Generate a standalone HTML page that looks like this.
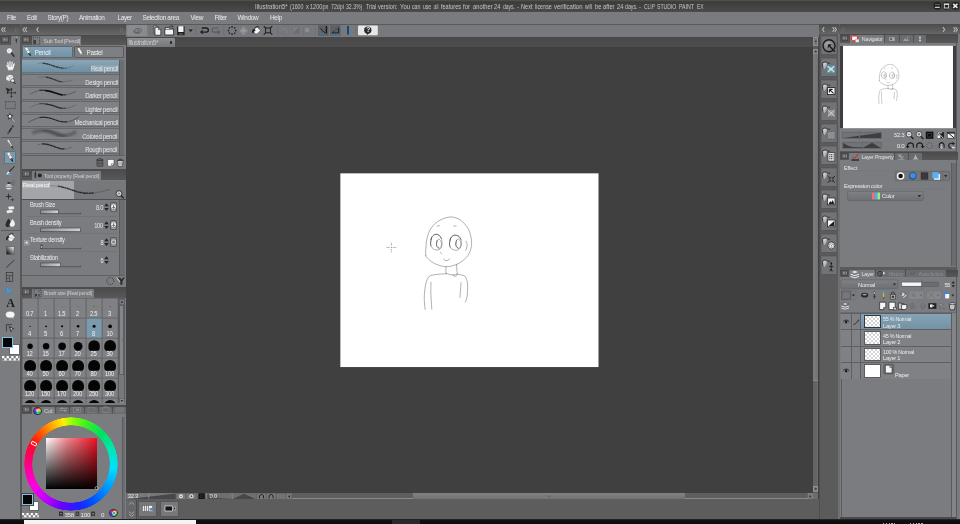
<!DOCTYPE html>
<html>
<head>
<meta charset="utf-8">
<title>CLIP STUDIO PAINT</title>
<style>
*{margin:0;padding:0;box-sizing:border-box}
html,body{width:960px;height:524px;overflow:hidden;background:#404040}
body{position:relative;font-family:"Liberation Sans",sans-serif;font-size:6.3px;color:#e4e4e4;font-variant-ligatures:none;font-feature-settings:"liga" 0,"clig" 0}
#wrap{position:absolute;left:0;top:0;width:960px;height:524px;overflow:hidden}
.a{position:absolute}
.t{position:absolute;white-space:nowrap;line-height:8px;color:#e6e6e6;opacity:0.99}
.pbg{background:#7b7c80}
.tabrow{background:linear-gradient(#4a4a4a,#585858)}
.tab{position:absolute;background:#7b7c80;border-radius:1px 1px 0 0}
.tabi{position:absolute;background:#6b6c6f;border-radius:1px 1px 0 0}
.btn{position:absolute;background:#6e6f72;border:0.5px solid #565656}
svg{position:absolute;overflow:visible}
.m{top:2.2px;font-size:6.4px;color:#ececec;letter-spacing:-0.32px}
.st{font-size:6.3px;letter-spacing:-0.3px;color:#e6e6e6;line-height:7px;transform:scaleX(0.965);transform-origin:right}
.pl{font-size:6.5px;letter-spacing:-0.3px;color:#ececec;line-height:7px;transform:scaleX(0.885);transform-origin:left}
.bl{font-size:6.8px;letter-spacing:-0.3px;color:#f0f0f0;line-height:7px;transform:scaleX(0.86);transform-origin:center}
.ly{font-size:6.2px;letter-spacing:-0.3px;color:#ececec;line-height:7px;transform:scaleX(0.93);transform-origin:left}
.lyn{transform:scaleX(0.87)}
.tt{top:3px;font-size:6.4px;color:#c6c6c6;transform-origin:left;line-height:7px}
</style>
</head>
<body>
<div id="wrap">
<!-- ===== TITLE BAR ===== -->
<div class="a" id="titlebar" style="left:0;top:0;width:960px;height:11.5px;background:linear-gradient(#585858 0,#454545 1px,#3c3c3c 2px,#4b4b4b)">
<div class="t tt" style="left:255px;transform:scaleX(0.924)">Illustration5*</div>
<div class="t tt" style="left:290.25px;transform:scaleX(0.825)">(1600</div>
<div class="t tt" style="left:306.25px;transform:scaleX(0.900)">x</div>
<div class="t tt" style="left:309.75px;transform:scaleX(0.875)">1200px</div>
<div class="t tt" style="left:330.6px;transform:scaleX(0.825)">72dpi</div>
<div class="t tt" style="left:345.6px;transform:scaleX(0.805)">32.3%)</div>
<div class="t tt" style="left:366px;transform:scaleX(0.819)">Trial</div>
<div class="t tt" style="left:378.1px;transform:scaleX(0.866)">version:</div>
<div class="t tt" style="left:400px;transform:scaleX(0.926)">You</div>
<div class="t tt" style="left:412.25px;transform:scaleX(0.810)">can</div>
<div class="t tt" style="left:423.1px;transform:scaleX(0.790)">use</div>
<div class="t tt" style="left:433.75px;transform:scaleX(0.679)">all</div>
<div class="t tt" style="left:440.6px;transform:scaleX(0.866)">features</div>
<div class="t tt" style="left:463.1px;transform:scaleX(0.924)">for</div>
<div class="t tt" style="left:472.8px;transform:scaleX(0.904)">another</div>
<div class="t tt" style="left:494.4px;transform:scaleX(0.900)">24</div>
<div class="t tt" style="left:502.5px;transform:scaleX(0.779)">days.</div>
<div class="t tt" style="left:516.9px;transform:scaleX(0.900)">-</div>
<div class="t tt" style="left:521px;transform:scaleX(0.875)">Next</div>
<div class="t tt" style="left:535px;transform:scaleX(0.849)">license</div>
<div class="t tt" style="left:554px;transform:scaleX(0.933)">verification</div>
<div class="t tt" style="left:585px;transform:scaleX(0.777)">will</div>
<div class="t tt" style="left:594.5px;transform:scaleX(0.900)">be</div>
<div class="t tt" style="left:603.1px;transform:scaleX(0.900)">after</div>
<div class="t tt" style="left:616.9px;transform:scaleX(0.900)">24</div>
<div class="t tt" style="left:625px;transform:scaleX(0.818)">days.</div>
<div class="t tt" style="left:639.4px;transform:scaleX(0.900)">-</div>
<div class="t tt" style="left:643.5px;transform:scaleX(0.767)">CLIP</div>
<div class="t tt" style="left:656.9px;transform:scaleX(0.801)">STUDIO</div>
<div class="t tt" style="left:679px;transform:scaleX(0.817)">PAINT</div>
<div class="t tt" style="left:696.5px;transform:scaleX(0.774)">EX</div>

<svg style="left:930px;top:0" width="30" height="12" viewBox="930 0 30 12">
<circle cx="937.3" cy="5.8" r="3.9" fill="#222"/><circle cx="946.5" cy="5.8" r="3.9" fill="#222"/><circle cx="955.3" cy="5.8" r="3.9" fill="#222"/>
<path d="M935 4.5h4.7" stroke="#8a8a8a" stroke-width="0.6"/><path d="M934.9 7.3h4.8" stroke="#e4e4e4" stroke-width="1.1"/>
<rect x="944.3" y="4.2" width="4.4" height="3.8" fill="none" stroke="#dcdcdc" stroke-width="0.9"/><path d="M943.9 4.2h5.2" stroke="#dcdcdc" stroke-width="1.3"/>
<path d="M953.2 3.9 L957.4 7.9 M957.4 3.9 L953.2 7.9" stroke="#ececec" stroke-width="1.5"/>
</svg>
</div>
<!-- ===== MENU BAR ===== -->
<div class="a" id="menubar" style="left:0;top:11.5px;width:960px;height:12px;background:#7a7b7f">
<div class="t m" style="left:7px">File</div>
<div class="t m" style="left:27px">Edit</div>
<div class="t m" style="left:47.5px">Story(P)</div>
<div class="t m" style="left:79px">Animation</div>
<div class="t m" style="left:117.5px">Layer</div>
<div class="t m" style="left:142.5px">Selection area</div>
<div class="t m" style="left:190.5px">View</div>
<div class="t m" style="left:214.5px">Filter</div>
<div class="t m" style="left:237.5px">Window</div>
<div class="t m" style="left:270px">Help</div>
</div>
<!-- ===== LEFT DOCK ===== -->
<div class="a" id="leftdock" style="left:0;top:23.5px;width:126.2px;height:495.5px;background:#585858"></div>
<!-- dock header bars -->
<div class="a" style="left:0;top:23.5px;width:20.3px;height:11px;background:linear-gradient(#4b4b4b,#686868)"></div>
<div class="a" style="left:21.5px;top:23.5px;width:104.7px;height:11px;background:linear-gradient(#4b4b4b,#686868)"></div>
<svg style="left:0;top:23.5px" width="126" height="11" viewBox="0 0 126 11">
<path d="M3.2 3.2 L1.6 5.6 L3.2 8 M5.4 3.2 L3.8 5.6 L5.4 8" stroke="#b4b4b6" stroke-width="1.1" fill="none"/>
<path d="M24.6 3.2 L23 5.6 L24.6 8 M26.8 3.2 L25.2 5.6 L26.8 8" stroke="#b4b4b6" stroke-width="1.1" fill="none"/>
<path d="M38.4 3.2 L36.8 5.6 L38.4 8" stroke="#b4b4b6" stroke-width="1.1" fill="none"/>
<path d="M15.5 3.5v4.4M17.3 3.5v4.4M120.5 3.5v4.4M122.3 3.5v4.4" stroke="#777" stroke-width="0.5"/>
</svg>
<!-- tab rows -->
<div class="a tabrow" style="left:0;top:35px;width:20.3px;height:10.3px"></div>
<div class="a tabrow" style="left:21.5px;top:35px;width:104.7px;height:10.3px"></div>
<div class="a" style="left:1.3px;top:36.2px;width:8px;height:6.6px;background:#5f5f61;border:0.5px solid #484848"></div>
<div class="a" style="left:22.2px;top:36.2px;width:8px;height:6.6px;background:#5f5f61;border:0.5px solid #484848"></div>
<div class="tab" style="left:11px;top:36px;width:9.3px;height:9.3px"></div>
<div class="tab" style="left:31.5px;top:36px;width:49.5px;height:9.3px"></div>
<svg style="left:0;top:35px" width="126" height="11" viewBox="0 0 126 11">
<path d="M3.6 3 L5.6 4.6 L3.6 6.2Z" fill="#a4a4a6"/><path d="M6.8 3v3.2" stroke="#a4a4a6" stroke-width="0.7" fill="none"/>
<path d="M24.5 3 L26.5 4.6 L24.5 6.2Z" fill="#a4a4a6"/><path d="M27.7 3v3.2" stroke="#a4a4a6" stroke-width="0.7" fill="none"/>
<path d="M16.4 1.8 L15.4 5 L16.4 8.6 L17.4 5 Z" fill="#3a3a3a"/><path d="M16.4 1.6v2" stroke="#ddd" stroke-width="0.6"/>
<rect x="33.4" y="2.2" width="6.2" height="7.6" fill="none" stroke="#333" stroke-width="0.7" stroke-dasharray="1 0.8"/><rect x="33.6" y="5" width="2.4" height="4" fill="#3c3c3c"/>
</svg>
<div class="t" style="left:43.5px;top:37.4px;font-size:5.5px;letter-spacing:-0.25px;color:#d0d0d2">Sub Tool [Pencil]</div>
<!-- tool palette column -->
<div class="a pbg" style="left:0;top:45.3px;width:20.3px;height:473.7px"></div>
<!-- sub tool panel -->
<div class="a pbg" style="left:21.5px;top:45.3px;width:104.7px;height:123.7px"></div>
<div class="a" style="left:22.4px;top:46.4px;width:50.6px;height:12px;background:linear-gradient(#85a2b3,#7292a5);border:0.5px solid #55697a;border-radius:1px"></div>
<div class="a" style="left:73.8px;top:46.4px;width:50.6px;height:12px;background:#7e7f83;border:0.5px solid #5a5a5c;border-radius:1px"></div>
<div class="t" style="left:34.8px;top:48.6px;font-size:6.4px;letter-spacing:-0.3px;color:#f2f2f2">Pencil</div>
<div class="t" style="left:86.5px;top:48.6px;font-size:6.4px;letter-spacing:-0.3px;color:#f0f0f0">Pastel</div>
<svg style="left:0;top:45px" width="126" height="14" viewBox="0 0 126 14">
<path d="M24.8 3.2 L27.2 2 L30.2 7.4 L27.8 8.8 Z" fill="#f6f6f6" stroke="#555" stroke-width="0.3"/><path d="M27.8 8.8 L30.2 7.4 L31 11.6 Z" fill="#1e1e1e"/><path d="M26.4 6.2 L28.8 4.8" stroke="#666" stroke-width="0.6"/><path d="M28.4 9.4 L30.4 8.2" stroke="#ccc" stroke-width="0.5"/>
<path d="M77 3.4 L79.4 2.4 L83.2 9 L80.8 10.2 Z" fill="#f4f4f4" stroke="#444" stroke-width="0.4"/><path d="M80.6 9.2 L82.8 8.2" stroke="#666" stroke-width="0.8"/>
</svg>
<div class="a" style="left:22px;top:60px;width:96.5px;height:13px;background:linear-gradient(#8aa7b8,#6e8ea1);border-bottom:0.6px solid #5d7686"></div>
<div class="t st" style="right:842.5px;top:65.2px;background:rgba(160,175,185,0.55);">Real pencil</div>
<div class="a" style="left:22px;top:73.5px;width:96.5px;height:12.7px;background:#808185;border-top:0.5px solid #66676a;border-bottom:0.6px solid #66676a"></div>
<div class="t st" style="right:842.5px;top:78.7px;">Design pencil</div>
<div class="a" style="left:22px;top:87px;width:96.5px;height:12.7px;background:#808185;border-top:0.5px solid #66676a;border-bottom:0.6px solid #66676a"></div>
<div class="t st" style="right:842.5px;top:92.2px;">Darker pencil</div>
<div class="a" style="left:22px;top:100.5px;width:96.5px;height:12.7px;background:#808185;border-top:0.5px solid #66676a;border-bottom:0.6px solid #66676a"></div>
<div class="t st" style="right:842.5px;top:105.7px;">Lighter pencil</div>
<div class="a" style="left:22px;top:114px;width:96.5px;height:12.7px;background:#808185;border-top:0.5px solid #66676a;border-bottom:0.6px solid #66676a"></div>
<div class="t st" style="right:842.5px;top:119.2px;">Mechanical pencil</div>
<div class="a" style="left:22px;top:127.5px;width:96.5px;height:12.7px;background:#808185;border-top:0.5px solid #66676a;border-bottom:0.6px solid #66676a"></div>
<div class="t st" style="right:842.5px;top:132.7px;">Colored pencil</div>
<div class="a" style="left:22px;top:141px;width:96.5px;height:12.7px;background:#808185;border-top:0.5px solid #66676a;border-bottom:0.6px solid #66676a"></div>
<div class="t st" style="right:842.5px;top:146.2px;">Rough pencil</div>

<div class="a" style="left:118.8px;top:60px;width:5.6px;height:95px;background:#6c6d70;border-left:0.5px solid #5b5b5d"></div>
<svg style="left:0;top:0" width="126" height="160" viewBox="0 0 126 160"><defs><filter id="b1"><feGaussianBlur stdDeviation="0.9"/></filter><filter id="b0"><feGaussianBlur stdDeviation="0.25"/></filter></defs><g filter="url(#b0)"><path d="M37.6 63.7 C39.5 63.2 41 63.1 42.8 63.2 C47 63.6 50 64.8 53.2 65.8 C58 67.4 62 68.4 66.8 68.2 C69.5 67.6 72 66.4 74 65.3" stroke="#2c3840" stroke-width="0.4" fill="none" opacity="0.6"/><path d="M42.8 63.2 C47 63.6 50 64.8 53.2 65.8 C57 67 60 68 63 68.2" stroke="#1c2428" stroke-width="1.25" fill="none" opacity="0.85" stroke-dasharray="2.4 0.35 3.2 0.3 1.4 0.5 2 0.3"/><path d="M63 68.2 C64.5 68.3 65.6 68.3 66.8 68.2" stroke="#1c2428" stroke-width="0.8" fill="none" opacity="0.7" stroke-dasharray="0.9 0.6"/></g><g filter="url(#b0)"><path d="M38.7 77.3 C42 76.6 44.5 76.8 47 77.3 C50.5 78 53.5 79.4 56.4 80.4 C59 81.3 61.5 81.8 63.7 81.75 C67 81.6 70 80.9 73 79.9" stroke="#2a2a2a" stroke-width="0.4" fill="none" opacity="0.55"/><path d="M46 77.1 C50 77.8 53.5 79.4 56.4 80.4 C58.6 81.2 60.6 81.7 62.6 81.8" stroke="#1e1e1e" stroke-width="1.15" fill="none" opacity="0.8" stroke-dasharray="3 0.3 2.6 0.3 1.8 0.4"/></g><g filter="url(#b0)"><path d="M30.3 94.0 C35.3 91.4 38.8 90.0 42.8 90.0 C47.8 90.0 52.3 91.8 55.3 92.9 C58.3 94.0 60.7 95.0 63.7 95.0 C68.7 95.0 72.2 93.0 76.2 91.3" stroke="#1a1a1a" stroke-width="0.45" fill="none" opacity="0.7"/><path d="M39.8 90.2 C44.8 89.8 51.3 91.4 55.3 92.9 C58.3 94.0 61.7 95.0 65.7 94.9" stroke="#141414" stroke-width="1.0" fill="none" opacity="0.8" stroke-linecap="round"/><path d="M45.8 90.6 C48.8 91.0 53.3 92.0 55.3 92.9 C57.3 93.7 59.7 94.7 61.7 94.9" stroke="#0c0c0c" stroke-width="1.6" fill="none" opacity="0.85" stroke-linecap="round"/></g><g filter="url(#b0)"><path d="M30.3 107.5 C35.3 104.9 38.8 103.5 42.8 103.5 C47.8 103.5 52.3 105.3 55.3 106.4 C58.3 107.5 60.7 108.5 63.7 108.5 C68.7 108.5 72.2 106.5 76.2 104.8" stroke="#2a2a2a" stroke-width="0.45" fill="none" opacity="0.55"/><path d="M39.8 103.7 C44.8 103.3 51.3 104.9 55.3 106.4 C58.3 107.5 61.7 108.5 65.7 108.4" stroke="#222" stroke-width="1.0" fill="none" opacity="0.6" stroke-linecap="round"/><path d="M45.8 104.1 C48.8 104.5 53.3 105.5 55.3 106.4 C57.3 107.2 59.7 108.2 61.7 108.4" stroke="#1c1c1c" stroke-width="1.4" fill="none" opacity="0.6" stroke-linecap="round"/></g><g filter="url(#b0)"><path d="M28.2 122.5 C33 119.6 38.5 117.2 43.9 117.1 C48.5 117 52 118.6 55.3 119.9 C59 121.3 62.5 122.2 65.8 122 C70.5 121.6 75 119.6 79.1 116.8" stroke="#1c1c1c" stroke-width="0.55" fill="none" opacity="0.75"/><path d="M40 117.4 C46 116.8 51 118.3 55.3 119.9 C59 121.3 62.5 122.2 66.8 121.9" stroke="#141414" stroke-width="0.95" fill="none" opacity="0.8" stroke-linecap="round"/></g><path d="M33.5 132.4 C37 131 41 130.2 44.9 130.3 C49 130.5 52 132 55.3 133.4 C58.5 134.8 61 135.9 63.7 136 C68 136 72 134 75.1 132.4" stroke="#2a2a2a" stroke-width="3.2" fill="none" opacity="0.42" stroke-linecap="round" filter="url(#b1)"/><path d="M44 130.6 C49 130.6 52 132.2 55.3 133.6 C58.5 135 61 135.9 65 135.8" stroke="#1e1e1e" stroke-width="2" fill="none" opacity="0.4" stroke-linecap="round" filter="url(#b1)"/><g filter="url(#b0)"><path d="M37.6 144.9 C40 144.2 42 143.8 44.4 143.9 C48.5 144.2 52 145.8 55.3 147 C58.5 148.2 61 149.1 63.7 149 C67 148.8 69.5 148.2 72 147.3" stroke="#222" stroke-width="0.45" fill="none" opacity="0.6"/><path d="M42 143.9 C47 143.8 51.5 145.6 55.3 147 C58.5 148.2 61 149.1 64.5 148.9" stroke="#161616" stroke-width="1.3" fill="none" opacity="0.8" stroke-dasharray="4 0.25 3.4 0.3 2.4 0.3"/></g></svg>
<div class="a" style="left:21.5px;top:155px;width:103.5px;height:0.6px;background:#5f6063"></div>

<!-- sub tool bottom icons -->
<svg style="left:90px;top:157.3px" width="36" height="12" viewBox="0 0 36 12">
<path d="M6.5 3 L9.8 1.2 L13.2 3 Z M7 3.6 h5.8 v5.6 h-5.8 Z" fill="none" stroke="#2e2e2e" stroke-width="0.7"/><path d="M8.6 4v5M10 4v5M11.4 4v5M7 6.4h5.8" stroke="#2e2e2e" stroke-width="0.4"/>
<path d="M17.6 2.4 h6.4 v4.6 l-2.2 2.2 h-4.2 Z" fill="#f8f8f8" stroke="#333" stroke-width="0.5"/><path d="M21.4 8.8 v-2 h2" fill="none" stroke="#333" stroke-width="0.5"/>
<path d="M27.6 3.6 h5.4 l-0.6 6 h-4.2 Z" fill="#e8e8e8" stroke="#2a2a2a" stroke-width="0.6"/><path d="M27 3.2 h6.6 M29 2.2 h2.6" stroke="#2a2a2a" stroke-width="0.8"/><path d="M29.2 4.6v4M30.3 4.6v4M31.4 4.6v4" stroke="#555" stroke-width="0.4"/>
</svg>
<!-- tool property tabs -->
<div class="a tabrow" style="left:21.5px;top:169px;width:104.7px;height:10.9px"></div>
<div class="a" style="left:22.2px;top:170.4px;width:8.2px;height:6.6px;background:#5f5f61;border:0.5px solid #484848"></div>
<div class="tab" style="left:31.5px;top:170.7px;width:69.5px;height:9.2px"></div>
<svg style="left:21.5px;top:169.4px" width="104" height="11" viewBox="0 0 104 11">
<path d="M3 3.2 L5 4.8 L3 6.4Z" fill="#a4a4a6"/><path d="M6.2 3.2v3.2" stroke="#a4a4a6" stroke-width="0.7" fill="none"/>
<path d="M13.4 1.6 L12.6 4.6 L12.6 8.8 L14.2 8.8 L14.2 4.6 Z" fill="#333"/><circle cx="17.8" cy="6.4" r="1.9" fill="#222"/>
</svg>
<div class="t" style="left:43.8px;top:171.6px;font-size:5.5px;letter-spacing:-0.22px;color:#d0d0d2;transform:scaleX(0.96);transform-origin:left">Tool property [Real pencil]</div>
<!-- tool property panel -->
<div class="a pbg" style="left:21.5px;top:179.8px;width:104.7px;height:108px"></div>
<div class="a" style="left:22px;top:180.6px;width:104px;height:19px;background:#77787c;border-bottom:0.6px solid #4e4e50"></div>
<div class="a" style="left:22px;top:180.6px;width:51.8px;height:18.6px;background:#a4a5a8"></div>
<div class="a" style="left:22px;top:180.8px;width:28.4px;height:7.4px;background:#b4b5b8"></div>
<div class="t" style="left:22.8px;top:181.2px;font-size:6.2px;letter-spacing:-0.3px;color:#f6f6f6;line-height:7px">Real pencil</div>
<svg style="left:22px;top:180px" width="104" height="20" viewBox="0 0 104 20">
<g filter="url(#b0)"><path d="M27 5.8 C34 5.6 40 6.6 46 8.6 C53 11 60 13.4 68 13.2 C74 13 80 11.6 88 9.4" stroke="#2a2a2a" stroke-width="0.45" fill="none" opacity="0.6"/>
<path d="M36 6.2 C43 7.2 50 10.2 56 12 C61 13.3 66 13.7 72 12.9" stroke="#1c1c1c" stroke-width="1.35" fill="none" opacity="0.8" stroke-dasharray="2.6 0.35 3.4 0.3 1.8 0.45 2.2 0.3"/></g>
<circle cx="97" cy="13.6" r="2.9" fill="#d8d8da" stroke="#1e1e1e" stroke-width="0.8"/><path d="M99.2 15.8 L101.8 18.4" stroke="#1e1e1e" stroke-width="1.3"/><path d="M95.6 13.6h2.8M97 12.2v2.8" stroke="#444" stroke-width="0.4"/>
</svg>
<div class="t pl" style="left:30px;top:201.2px">Brush Size</div><svg style="left:40px;top:208.79999999999998px" width="42" height="6" viewBox="0 0 42 6"><path d="M0.6 4.7h40.2" stroke="#47484a" stroke-width="0.7"/><path d="M40.6 3.6v1.4" stroke="#47484a" stroke-width="0.7"/><rect x="0.7" y="1" width="17.6" height="3.7" fill="url(#slg)" stroke="#404143" stroke-width="0.6"/></svg><div class="t pl" style="right:857px;top:204.2px;color:#e6e6e6;transform-origin:right">8.0</div><svg style="left:104px;top:202.79999999999998px" width="5" height="8.4" viewBox="0 0 5 8.4"><path d="M0.2 3.3 L2.5 0.3 L4.8 3.3 Z M0.2 4.9 L2.5 7.9 L4.8 4.9 Z" fill="#262626"/></svg><div class="a" style="left:109.8px;top:201.79999999999998px;width:7.2px;height:10.2px;background:#85868a;border:0.5px solid #5a5b5d;border-radius:1px"></div><svg style="left:109.8px;top:201.79999999999998px" width="7.2" height="10.2" viewBox="0 0 7.2 10.2"><circle cx="3.6" cy="4.8" r="2.5" fill="#f2f2f2"/><path d="M3.6 3.2v2.6M2.5 5 L3.6 6.4 L4.7 5" stroke="#222" stroke-width="0.7" fill="none"/><path d="M2.2 8.3h2.8" stroke="#ddd" stroke-width="0.5"/></svg><div class="a" style="left:27px;top:215.6px;width:90px;height:0.5px;background:#737478"></div>
<div class="t pl" style="left:30px;top:219px">Brush density</div><svg style="left:40px;top:226.6px" width="42" height="6" viewBox="0 0 42 6"><path d="M0.6 4.7h40.2" stroke="#47484a" stroke-width="0.7"/><path d="M40.6 3.6v1.4" stroke="#47484a" stroke-width="0.7"/><rect x="0.7" y="1" width="39.8" height="3.7" fill="url(#slg)" stroke="#404143" stroke-width="0.6"/></svg><div class="t pl" style="right:857px;top:222px;color:#e6e6e6;transform-origin:right">100</div><svg style="left:104px;top:220.6px" width="5" height="8.4" viewBox="0 0 5 8.4"><path d="M0.2 3.3 L2.5 0.3 L4.8 3.3 Z M0.2 4.9 L2.5 7.9 L4.8 4.9 Z" fill="#262626"/></svg><div class="a" style="left:109.8px;top:219.6px;width:7.2px;height:10.2px;background:#85868a;border:0.5px solid #5a5b5d;border-radius:1px"></div><svg style="left:109.8px;top:219.6px" width="7.2" height="10.2" viewBox="0 0 7.2 10.2"><circle cx="3.6" cy="4.8" r="2.5" fill="#f2f2f2"/><path d="M3.6 3.2v2.6M2.5 5 L3.6 6.4 L4.7 5" stroke="#222" stroke-width="0.7" fill="none"/><path d="M2.2 8.3h2.8" stroke="#ddd" stroke-width="0.5"/></svg><div class="a" style="left:27px;top:233.4px;width:90px;height:0.5px;background:#737478"></div>
<div class="t pl" style="left:30px;top:236.4px">Texture density</div><svg style="left:40px;top:244.0px" width="42" height="6" viewBox="0 0 42 6"><path d="M0.6 4.7h40.2" stroke="#47484a" stroke-width="0.7"/><path d="M40.6 3.6v1.4" stroke="#47484a" stroke-width="0.7"/><rect x="0.7" y="1" width="1.8" height="3.7" fill="#b4b5b8" stroke="#404143" stroke-width="0.6"/></svg><div class="t pl" style="right:857px;top:239.4px;color:#e6e6e6;transform-origin:right">8</div><svg style="left:104px;top:238.0px" width="5" height="8.4" viewBox="0 0 5 8.4"><path d="M0.2 3.3 L2.5 0.3 L4.8 3.3 Z M0.2 4.9 L2.5 7.9 L4.8 4.9 Z" fill="#262626"/></svg><div class="a" style="left:109.8px;top:237.0px;width:7.2px;height:10.2px;background:#85868a;border:0.5px solid #5a5b5d;border-radius:1px"></div><svg style="left:109.8px;top:237.0px" width="7.2" height="10.2" viewBox="0 0 7.2 10.2"><rect x="1.7" y="3.1" width="3.8" height="3.8" rx="1.1" fill="none" stroke="#f0f0f0" stroke-width="0.8"/></svg><svg style="left:24px;top:239.6px" width="5.4" height="5.4" viewBox="0 0 5.4 5.4"><rect x="0.3" y="0.3" width="4.8" height="4.8" fill="#8e8f92" stroke="#a8a9ac" stroke-width="0.4"/><path d="M1.2 2.7h3M2.7 1.2v3" stroke="#f0f0f0" stroke-width="0.7"/></svg><div class="a" style="left:27px;top:250.8px;width:90px;height:0.5px;background:#737478"></div>
<div class="t pl" style="left:30px;top:254px">Stabilization</div><svg style="left:40px;top:261.6px" width="42" height="6" viewBox="0 0 42 6"><path d="M0.6 4.7h40.2" stroke="#47484a" stroke-width="0.7"/><path d="M40.6 3.6v1.4" stroke="#47484a" stroke-width="0.7"/><rect x="0.7" y="1" width="19.6" height="3.7" fill="url(#slg)" stroke="#404143" stroke-width="0.6"/></svg><div class="t pl" style="right:857px;top:257px;color:#e6e6e6;transform-origin:right">6</div><svg style="left:104px;top:255.6px" width="5" height="8.4" viewBox="0 0 5 8.4"><path d="M0.2 3.3 L2.5 0.3 L4.8 3.3 Z M0.2 4.9 L2.5 7.9 L4.8 4.9 Z" fill="#262626"/></svg>
<svg style="left:0;top:0" width="1" height="1"><defs><linearGradient id="slg" x1="0" y1="0" x2="1" y2="0"><stop offset="0" stop-color="#8e8f92"/><stop offset="1" stop-color="#cfd0d3"/></linearGradient></defs></svg>
<div class="a" style="left:119.4px;top:200px;width:5.4px;height:75px;background:#6c6d70;border-left:0.5px solid #5b5b5d"></div>
<div class="a" style="left:21.5px;top:275.2px;width:103.5px;height:0.6px;background:#5f6063"></div>
<svg style="left:104px;top:276px" width="22" height="12" viewBox="0 0 22 12">
<circle cx="6.3" cy="5" r="3.5" fill="none" stroke="#2a2a2a" stroke-width="0.95" stroke-dasharray="1 1.2"/>
<path d="M13.4 1.4 L16.4 5.2 L16.4 8.8 L18.4 8.8 L18.4 5.2 L20.8 1.6 L19 1.4 L17.6 3.6 L16.4 1.8 Z" fill="#2c2c2c"/><path d="M12.8 1.6 L15.8 5.8" stroke="#e8e8e8" stroke-width="0.9"/>
</svg>

<!-- brush size panel -->
<div class="a tabrow" style="left:21.5px;top:287.2px;width:104.7px;height:11px"></div>
<div class="a" style="left:22.2px;top:288.2px;width:8.2px;height:6.6px;background:#5f5f61;border:0.5px solid #484848"></div>
<div class="tab" style="left:31.5px;top:288.9px;width:62.5px;height:9.3px"></div>
<svg style="left:21.5px;top:287.4px" width="104" height="11" viewBox="0 0 104 11">
<path d="M3 3.2 L5 4.8 L3 6.4Z" fill="#a4a4a6"/><path d="M6.2 3.2v3.2" stroke="#a4a4a6" stroke-width="0.7" fill="none"/>
<rect x="12" y="2" width="7" height="8" fill="none" stroke="#333" stroke-width="0.7" stroke-dasharray="1.2 0.8"/><circle cx="14" cy="8" r="1" fill="#222"/><circle cx="17" cy="4" r="0.6" fill="#222"/><circle cx="17" cy="8" r="0.8" fill="#222"/>
</svg>
<div class="t" style="left:43.8px;top:289.3px;font-size:5.5px;letter-spacing:-0.22px;color:#d0d0d2;transform:scaleX(0.92);transform-origin:left">Brush size [Real pencil]</div>
<div class="a pbg" style="left:21.5px;top:298.2px;width:104.7px;height:107px"></div><div class="a" style="left:21.5px;top:298.2px;width:103.5px;height:105.3px;background:#5c5d60;overflow:hidden" id="bsgrid">
<svg style="left:0;top:0" width="104" height="106" viewBox="0 0 104 106"><rect x="0.5" y="0.5" width="15.2" height="19.2" fill="#808185"/><circle cx="8.1" cy="8.3" r="0.25" fill="#404040"/><rect x="16.5" y="0.5" width="15.2" height="19.2" fill="#808185"/><circle cx="24.1" cy="8.3" r="0.3" fill="#404040"/><rect x="32.5" y="0.5" width="15.2" height="19.2" fill="#808185"/><circle cx="40.1" cy="8.3" r="0.35" fill="#404040"/><rect x="48.5" y="0.5" width="15.2" height="19.2" fill="#808185"/><circle cx="56.1" cy="8.3" r="0.4" fill="#404040"/><rect x="64.5" y="0.5" width="15.2" height="19.2" fill="#808185"/><circle cx="72.1" cy="8.3" r="0.45" fill="#404040"/><rect x="80.5" y="0.5" width="15.2" height="19.2" fill="#808185"/><circle cx="88.1" cy="8.3" r="0.55" fill="#404040"/><rect x="0.5" y="20.5" width="15.2" height="19.2" fill="#808185"/><circle cx="8.1" cy="28.3" r="0.65" fill="#050505"/><rect x="16.5" y="20.5" width="15.2" height="19.2" fill="#808185"/><circle cx="24.1" cy="28.3" r="0.9" fill="#050505"/><rect x="32.5" y="20.5" width="15.2" height="19.2" fill="#808185"/><circle cx="40.1" cy="28.3" r="1.05" fill="#050505"/><rect x="48.5" y="20.5" width="15.2" height="19.2" fill="#808185"/><circle cx="56.1" cy="28.3" r="1.3" fill="#050505"/><rect x="64.5" y="20.5" width="15.2" height="19.2" fill="#7a9aad"/><circle cx="72.1" cy="28.3" r="1.5" fill="#050505"/><rect x="80.5" y="20.5" width="15.2" height="19.2" fill="#808185"/><circle cx="88.1" cy="28.3" r="1.9" fill="#050505"/><rect x="0.5" y="40.5" width="15.2" height="19.2" fill="#808185"/><circle cx="8.1" cy="48.3" r="2.7" fill="#050505"/><rect x="16.5" y="40.5" width="15.2" height="19.2" fill="#808185"/><circle cx="24.1" cy="48.3" r="3.25" fill="#050505"/><rect x="32.5" y="40.5" width="15.2" height="19.2" fill="#808185"/><circle cx="40.1" cy="48.3" r="3.75" fill="#050505"/><rect x="48.5" y="40.5" width="15.2" height="19.2" fill="#808185"/><circle cx="56.1" cy="48.3" r="4.4" fill="#050505"/><rect x="64.5" y="40.5" width="15.2" height="19.2" fill="#808185"/><path d="M66.39999999999999 47.9 a5.7 5.7 0 0 1 11.4 0 a5.7 5.7 0 0 1 -1.50 4.9 h-8.40 a5.7 5.7 0 0 1 -1.50 -4.9Z" fill="#050505"/><rect x="80.5" y="40.5" width="15.2" height="19.2" fill="#808185"/><path d="M82.19999999999999 47.9 a5.9 5.9 0 0 1 11.8 0 a5.9 5.9 0 0 1 -1.70 4.9 h-8.40 a5.9 5.9 0 0 1 -1.70 -4.9Z" fill="#050505"/><rect x="0.5" y="60.5" width="15.2" height="19.2" fill="#808185"/><path d="M2.0999999999999996 67.9 a6 6 0 0 1 12 0 a6 6 0 0 1 -1.80 4.9 h-8.40 a6 6 0 0 1 -1.80 -4.9Z" fill="#050505"/><rect x="16.5" y="60.5" width="15.2" height="19.2" fill="#808185"/><path d="M18.1 67.9 a6 6 0 0 1 12 0 a6 6 0 0 1 -1.80 4.9 h-8.40 a6 6 0 0 1 -1.80 -4.9Z" fill="#050505"/><rect x="32.5" y="60.5" width="15.2" height="19.2" fill="#808185"/><path d="M34.1 67.9 a6 6 0 0 1 12 0 a6 6 0 0 1 -1.80 4.9 h-8.40 a6 6 0 0 1 -1.80 -4.9Z" fill="#050505"/><rect x="48.5" y="60.5" width="15.2" height="19.2" fill="#808185"/><path d="M50.1 67.9 a6 6 0 0 1 12 0 a6 6 0 0 1 -1.80 4.9 h-8.40 a6 6 0 0 1 -1.80 -4.9Z" fill="#050505"/><rect x="64.5" y="60.5" width="15.2" height="19.2" fill="#808185"/><path d="M66.1 67.9 a6 6 0 0 1 12 0 a6 6 0 0 1 -1.80 4.9 h-8.40 a6 6 0 0 1 -1.80 -4.9Z" fill="#050505"/><rect x="80.5" y="60.5" width="15.2" height="19.2" fill="#808185"/><path d="M82.1 67.9 a6 6 0 0 1 12 0 a6 6 0 0 1 -1.80 4.9 h-8.40 a6 6 0 0 1 -1.80 -4.9Z" fill="#050505"/><rect x="0.5" y="80.5" width="15.2" height="19.2" fill="#808185"/><path d="M2.0999999999999996 87.9 a6 6 0 0 1 12 0 a6 6 0 0 1 -1.80 4.9 h-8.40 a6 6 0 0 1 -1.80 -4.9Z" fill="#050505"/><rect x="16.5" y="80.5" width="15.2" height="19.2" fill="#808185"/><path d="M18.1 87.9 a6 6 0 0 1 12 0 a6 6 0 0 1 -1.80 4.9 h-8.40 a6 6 0 0 1 -1.80 -4.9Z" fill="#050505"/><rect x="32.5" y="80.5" width="15.2" height="19.2" fill="#808185"/><path d="M34.1 87.9 a6 6 0 0 1 12 0 a6 6 0 0 1 -1.80 4.9 h-8.40 a6 6 0 0 1 -1.80 -4.9Z" fill="#050505"/><rect x="48.5" y="80.5" width="15.2" height="19.2" fill="#808185"/><path d="M50.1 87.9 a6 6 0 0 1 12 0 a6 6 0 0 1 -1.80 4.9 h-8.40 a6 6 0 0 1 -1.80 -4.9Z" fill="#050505"/><rect x="64.5" y="80.5" width="15.2" height="19.2" fill="#808185"/><path d="M66.1 87.9 a6 6 0 0 1 12 0 a6 6 0 0 1 -1.80 4.9 h-8.40 a6 6 0 0 1 -1.80 -4.9Z" fill="#050505"/><rect x="80.5" y="80.5" width="15.2" height="19.2" fill="#808185"/><path d="M82.1 87.9 a6 6 0 0 1 12 0 a6 6 0 0 1 -1.80 4.9 h-8.40 a6 6 0 0 1 -1.80 -4.9Z" fill="#050505"/><rect x="0.5" y="100.5" width="15.2" height="19.2" fill="#808185"/><path d="M2.0999999999999996 107.9 a6 6 0 0 1 12 0 a6 6 0 0 1 -1.80 4.9 h-8.40 a6 6 0 0 1 -1.80 -4.9Z" fill="#050505"/><rect x="16.5" y="100.5" width="15.2" height="19.2" fill="#808185"/><path d="M18.1 107.9 a6 6 0 0 1 12 0 a6 6 0 0 1 -1.80 4.9 h-8.40 a6 6 0 0 1 -1.80 -4.9Z" fill="#050505"/><rect x="32.5" y="100.5" width="15.2" height="19.2" fill="#808185"/><path d="M34.1 107.9 a6 6 0 0 1 12 0 a6 6 0 0 1 -1.80 4.9 h-8.40 a6 6 0 0 1 -1.80 -4.9Z" fill="#050505"/><rect x="48.5" y="100.5" width="15.2" height="19.2" fill="#808185"/><path d="M50.1 107.9 a6 6 0 0 1 12 0 a6 6 0 0 1 -1.80 4.9 h-8.40 a6 6 0 0 1 -1.80 -4.9Z" fill="#050505"/><rect x="64.5" y="100.5" width="15.2" height="19.2" fill="#808185"/><path d="M66.1 107.9 a6 6 0 0 1 12 0 a6 6 0 0 1 -1.80 4.9 h-8.40 a6 6 0 0 1 -1.80 -4.9Z" fill="#050505"/><rect x="80.5" y="100.5" width="15.2" height="19.2" fill="#808185"/><path d="M82.1 107.9 a6 6 0 0 1 12 0 a6 6 0 0 1 -1.80 4.9 h-8.40 a6 6 0 0 1 -1.80 -4.9Z" fill="#050505"/></svg>
<div class="t bl" style="left:0.5px;width:15.2px;top:12.2px;text-align:center">0.7</div><div class="t bl" style="left:16.5px;width:15.2px;top:12.2px;text-align:center">1</div><div class="t bl" style="left:32.5px;width:15.2px;top:12.2px;text-align:center">1.5</div><div class="t bl" style="left:48.5px;width:15.2px;top:12.2px;text-align:center">2</div><div class="t bl" style="left:64.5px;width:15.2px;top:12.2px;text-align:center">2.5</div><div class="t bl" style="left:80.5px;width:15.2px;top:12.2px;text-align:center">3</div><div class="t bl" style="left:0.5px;width:15.2px;top:32.2px;text-align:center">4</div><div class="t bl" style="left:16.5px;width:15.2px;top:32.2px;text-align:center">5</div><div class="t bl" style="left:32.5px;width:15.2px;top:32.2px;text-align:center">6</div><div class="t bl" style="left:48.5px;width:15.2px;top:32.2px;text-align:center">7</div><div class="t bl" style="left:64.5px;width:15.2px;top:32.2px;text-align:center">8</div><div class="t bl" style="left:80.5px;width:15.2px;top:32.2px;text-align:center">10</div><div class="t bl" style="left:0.5px;width:15.2px;top:52.2px;text-align:center">12</div><div class="t bl" style="left:16.5px;width:15.2px;top:52.2px;text-align:center">15</div><div class="t bl" style="left:32.5px;width:15.2px;top:52.2px;text-align:center">17</div><div class="t bl" style="left:48.5px;width:15.2px;top:52.2px;text-align:center">20</div><div class="t bl" style="left:64.5px;width:15.2px;top:52.2px;text-align:center">25</div><div class="t bl" style="left:80.5px;width:15.2px;top:52.2px;text-align:center">30</div><div class="t bl" style="left:0.5px;width:15.2px;top:72.2px;text-align:center">40</div><div class="t bl" style="left:16.5px;width:15.2px;top:72.2px;text-align:center">50</div><div class="t bl" style="left:32.5px;width:15.2px;top:72.2px;text-align:center">60</div><div class="t bl" style="left:48.5px;width:15.2px;top:72.2px;text-align:center">70</div><div class="t bl" style="left:64.5px;width:15.2px;top:72.2px;text-align:center">80</div><div class="t bl" style="left:80.5px;width:15.2px;top:72.2px;text-align:center">100</div><div class="t bl" style="left:0.5px;width:15.2px;top:92.2px;text-align:center">120</div><div class="t bl" style="left:16.5px;width:15.2px;top:92.2px;text-align:center">150</div><div class="t bl" style="left:32.5px;width:15.2px;top:92.2px;text-align:center">170</div><div class="t bl" style="left:48.5px;width:15.2px;top:92.2px;text-align:center">200</div><div class="t bl" style="left:64.5px;width:15.2px;top:92.2px;text-align:center">250</div><div class="t bl" style="left:80.5px;width:15.2px;top:92.2px;text-align:center">300</div><div class="t bl" style="left:0.5px;width:15.2px;top:112.2px;text-align:center"></div><div class="t bl" style="left:16.5px;width:15.2px;top:112.2px;text-align:center"></div><div class="t bl" style="left:32.5px;width:15.2px;top:112.2px;text-align:center"></div><div class="t bl" style="left:48.5px;width:15.2px;top:112.2px;text-align:center"></div><div class="t bl" style="left:64.5px;width:15.2px;top:112.2px;text-align:center"></div><div class="t bl" style="left:80.5px;width:15.2px;top:112.2px;text-align:center"></div>
<div class="a" style="left:97.2px;top:0.6px;width:5.8px;height:106px;background:#77787b"></div>
<div class="a" style="left:97.8px;top:6.6px;width:4.6px;height:70px;background:#85868a;border:0.5px solid #5e5f62"></div>
<svg style="left:97.2px;top:0.6px" width="5.8" height="106" viewBox="0 0 5.8 106"><rect x="0.4" y="0.4" width="5" height="5" fill="#7c7d80" stroke="#555" stroke-width="0.5"/><path d="M1.6 3.8 L2.9 1.8 L4.2 3.8 Z" fill="#2a2a2a"/><rect x="0.4" y="99.4" width="5" height="5" fill="#8a8b8e" stroke="#555" stroke-width="0.5"/><path d="M1.6 101 L2.9 103 L4.2 101 Z" fill="#2a2a2a"/><path d="M2 40h1.8M2 41h1.8M2 42h1.8" stroke="#666" stroke-width="0.4"/></svg>
</div>

<!-- color panel -->
<div class="a tabrow" style="left:21.5px;top:404.8px;width:104.7px;height:8.9px"></div>
<div class="a" style="left:22.2px;top:406.1px;width:8.2px;height:6.8px;background:#5f5f61;border:0.5px solid #484848"></div>
<div class="tab" style="left:31.5px;top:406.7px;width:23.4px;height:7px"></div>
<div class="tabi" style="left:55.800000000000004px;top:407px;width:13.4px;height:6.7px"></div>
<div class="tabi" style="left:70.19999999999999px;top:407px;width:13.4px;height:6.7px"></div>
<div class="tabi" style="left:84.6px;top:407px;width:13.4px;height:6.7px"></div>
<div class="tabi" style="left:99.0px;top:407px;width:13.4px;height:6.7px"></div>
<div class="tabi" style="left:113.4px;top:407px;width:12.6px;height:6.7px"></div>
<div class="a" style="left:33.1px;top:406.5px;width:8.6px;height:8.6px;z-index:3;border-radius:50%;background:conic-gradient(#ff2020,#ffe020,#30d030,#20c8e8,#2040e0,#d020d0,#ff2020);border:0.5px solid #333"></div>
<div class="a" style="left:35.9px;top:409.3px;width:3px;height:3px;border-radius:50%;background:#ccc;z-index:3"></div>
<div class="t" style="left:44px;top:407.2px;font-size:5.8px;letter-spacing:-0.2px;color:#d0d0d2">Col:</div>
<svg style="left:21.5px;top:405px" width="12" height="10" viewBox="0 0 12 10"><path d="M3 2.8 L5 4.4 L3 6Z" fill="#a4a4a6"/><path d="M6.2 2.8v3.2" stroke="#a4a4a6" stroke-width="0.7" fill="none"/></svg>
<svg style="left:55.6px;top:405.4px" width="71" height="10" viewBox="0 0 71 10">
<path d="M3 3.4h8M3 5.6h8" stroke="#8e8f92" stroke-width="0.8"/><rect x="5" y="2.6" width="1.6" height="1.6" fill="#a0a1a4"/><rect x="8" y="4.8" width="1.6" height="1.6" fill="#a0a1a4"/>
<rect x="17.6" y="2.6" width="7" height="4.6" fill="none" stroke="#8a8b8e" stroke-width="0.6"/><rect x="20" y="3.6" width="3" height="2.4" fill="#8a8b8e"/>
<rect x="32" y="2.6" width="6.6" height="4.8" fill="none" stroke="#8a8b8e" stroke-width="0.6" stroke-dasharray="1 0.6"/>
<rect x="46.4" y="2.8" width="6.6" height="4.4" fill="none" stroke="#8a8b8e" stroke-width="0.6"/><path d="M48 2.8v-1h3.4v1" stroke="#8a8b8e" stroke-width="0.6" fill="none"/>
<rect x="60" y="3" width="7" height="4" fill="none" stroke="#8a8b8e" stroke-width="0.6"/><path d="M61 5h5" stroke="#8a8b8e" stroke-width="0.8"/>
</svg>
<div class="a pbg" style="left:21.5px;top:413.6px;width:104.7px;height:105.4px"></div>
<div class="a" style="left:121.6px;top:416.6px;width:3.2px;height:102px;background:#6c6d70;border-left:0.5px solid #5b5b5d"></div>
<!-- wheel -->
<div class="a" style="left:24.3px;top:416.8px;width:93.8px;height:93.8px;border-radius:50%;background:conic-gradient(from 0deg,#9eff00 0deg,#40f020 20deg,#00e060 45deg,#00e8b0 70deg,#00e0ff 95deg,#00a0ff 120deg,#0050ff 150deg,#2020ff 170deg,#7000ff 195deg,#c000ff 215deg,#ff00e0 240deg,#ff00a0 262deg,#ff0050 285deg,#ff1010 300deg,#ff6000 318deg,#ffb000 335deg,#fff000 350deg,#9eff00 360deg);-webkit-mask:radial-gradient(circle closest-side,transparent 38.4px,#000 39px,#000 46.4px,transparent 46.9px);mask:radial-gradient(circle closest-side,transparent 38.4px,#000 39px,#000 46.4px,transparent 46.9px)"></div>
<div class="a" style="left:45.8px;top:438px;width:51px;height:50.6px;background:linear-gradient(to top,#000,rgba(0,0,0,0)),linear-gradient(to right,#fff,#f2848c 42%,#ee1024)"></div>
<svg style="left:21.5px;top:415px" width="104" height="104" viewBox="0 0 104 104">
<rect x="-1.4" y="-2.6" width="2.8" height="5.2" rx="0.6" fill="none" stroke="#fff" stroke-width="0.9" transform="translate(12,28.6) rotate(-62)"/>
<circle cx="74.8" cy="73.2" r="1.7" fill="none" stroke="#e8e8e8" stroke-width="0.6"/><circle cx="74.8" cy="73.2" r="2.2" fill="none" stroke="#333" stroke-width="0.3"/>
</svg>
<!-- swatches -->
<div class="a" style="left:28.8px;top:501px;width:10px;height:10.2px;background:#fff;border:0.5px solid #666"></div>
<div class="a" style="left:21.6px;top:493.8px;width:11px;height:11px;background:#060606;border:1px solid #8cc0e0;outline:0.5px solid #444"></div>
<svg style="left:22px;top:512.5px" width="16.8" height="4.4" viewBox="0 0 16.8 4.4"><rect width="16.8" height="4.4" fill="#fff"/><rect x="2.20" y="0.00" width="2.20" height="2.20" fill="#7e7e7e"/><rect x="6.60" y="0.00" width="2.20" height="2.20" fill="#7e7e7e"/><rect x="11.00" y="0.00" width="2.20" height="2.20" fill="#7e7e7e"/><rect x="15.40" y="0.00" width="1.40" height="2.20" fill="#7e7e7e"/><rect x="0.00" y="2.20" width="2.20" height="2.20" fill="#7e7e7e"/><rect x="4.40" y="2.20" width="2.20" height="2.20" fill="#7e7e7e"/><rect x="8.80" y="2.20" width="2.20" height="2.20" fill="#7e7e7e"/><rect x="13.20" y="2.20" width="2.20" height="2.20" fill="#7e7e7e"/></svg>
<svg style="left:58px;top:510px" width="62" height="9" viewBox="0 0 62 9">
<rect x="1" y="1.6" width="4" height="4.2" fill="#2e2e2e"/><path d="M2 3.7h2" stroke="#ddd" stroke-width="0.6"/>
<rect x="17.6" y="1.6" width="3.6" height="4.2" fill="#2e2e2e"/><path d="M18.4 3h2M18.4 4.4h2" stroke="#ddd" stroke-width="0.4"/>
<rect x="33" y="1.6" width="4" height="4.2" fill="#2e2e2e"/><path d="M34 2.8 L35 4.6 L36 2.8" stroke="#ddd" stroke-width="0.5" fill="none"/>
</svg>
<div class="t" style="left:64.4px;top:510.6px;font-size:6.2px;letter-spacing:-0.3px;color:#ececec;line-height:7px">358</div>
<div class="t" style="left:80.6px;top:510.6px;font-size:6.2px;letter-spacing:-0.3px;color:#ececec;line-height:7px">100</div>
<div class="t" style="left:101px;top:510.6px;font-size:6.2px;letter-spacing:-0.3px;color:#ececec;line-height:7px">0</div>
<div class="a" style="left:109.4px;top:508.6px;width:8.6px;height:8.6px;border-radius:50%;background:conic-gradient(#ff2020,#ffe020,#30d030,#20c8e8,#2040e0,#d020d0,#ff2020);border:0.5px solid #333"></div>
<div class="a" style="left:111.6px;top:510.8px;width:4.2px;height:4.2px;border-radius:50%;background:#666;border:0.8px solid #ddd"></div>

<!-- tool palette icons -->
<div class="a" style="left:4.4px;top:151.2px;width:12px;height:12.4px;background:#7a9aad;border:0.5px solid #5b7585"></div>
<div class="a" style="left:0.6px;top:137px;width:19px;height:0.6px;background:#5c5d60"></div>
<div class="a" style="left:0.6px;top:230.4px;width:19px;height:0.6px;background:#5c5d60"></div>
<svg style="left:0;top:44px" width="21" height="320" viewBox="0 44 21 320">
<!-- magnifier 52.4 -->
<circle cx="9.4" cy="50.8" r="2.9" fill="#f2f2f2" stroke="#555" stroke-width="0.4"/><path d="M11.4 53 L14 56.2" stroke="#2a2a2a" stroke-width="1.4" stroke-linecap="round"/><path d="M8 50.6h1.6" stroke="#888" stroke-width="0.5"/>
<!-- hand 65.9 -->
<path d="M8 70.2 L7.6 67.6 L6 65.6 L6.8 64.8 L8 66 L8 67 L12.8 67 L13.6 64.2 L14.6 64.6 L13.4 68.4 L12.6 70.2 Z" fill="#f4f4f4"/>
<path d="M8.4 67 L7.8 62.6 M10 66.8 L9.9 61.6 M11.6 66.8 L12.2 62 M12.8 67.2 L14.2 63.8" stroke="#f4f4f4" stroke-width="1.15" stroke-linecap="round"/>
<path d="M7.9 69.9 L12.7 69.9" stroke="#999" stroke-width="0.4"/>
<!-- operation 78.9 -->
<path d="M6 76 L10 74.4 L13.4 75.6 L13.4 79.6 L9.4 81.4 L6 80 Z" fill="#f2f2f2" stroke="#555" stroke-width="0.4"/><path d="M6 76 L9.6 77.4 L13.4 75.6 M9.6 77.4 V81.2" stroke="#777" stroke-width="0.4" fill="none"/><circle cx="12.6" cy="80.6" r="1.9" fill="#e8e8e8" stroke="#2a2a2a" stroke-width="0.6"/><path d="M13.8 82 L15.6 84" stroke="#2a2a2a" stroke-width="1"/>
<!-- move 92.2 -->
<path d="M5.6 87.4 L11.6 90 L9 90.8 L8 93.6 Z" fill="#2a2a2a"/><path d="M11.4 88.6 V97 M7.2 92.8 H15.6" stroke="#2a2a2a" stroke-width="0.7"/><path d="M11.4 87.8 l-1.3 1.6h2.6Z M11.4 97.8 l-1.3 -1.6h2.6Z M6.4 92.8 l1.6 -1.3v2.6Z M16.4 92.8 l-1.6 -1.3v2.6Z" fill="#2a2a2a"/>
<!-- marquee 105 -->
<rect x="5.6" y="101.6" width="9.6" height="7" fill="none" stroke="#2a2a2a" stroke-width="0.6" stroke-dasharray="1.2 0.8"/>
<!-- wand 117 -->
<path d="M10 112.2 L10.8 115 L13.6 115.4 L11.4 117 L12 119.8 L10 118.2 L8 119.8 L8.6 117 L6.4 115.4 L9.2 115 Z" fill="#2a2a2a"/><circle cx="10" cy="116.4" r="1.3" fill="#eee"/><path d="M11.6 118.4 L14.6 121.6" stroke="#ccc" stroke-width="0.8"/>
<!-- eyedropper 130 -->
<path d="M12.6 125 L13.8 126.2 L9.2 133 L7.6 134.6 L7.8 132.4 Z" fill="#2a2a2a"/><path d="M11.4 127 L12.8 128.2" stroke="#ddd" stroke-width="0.7"/><path d="M8.4 132.4 L9 133" stroke="#ccc" stroke-width="0.5"/>
<!-- pen 144.8 -->
<path d="M6.8 140 L8.8 139.6 L12.2 145.6 L11 146.8 Z" fill="#f2f2f2" stroke="#555" stroke-width="0.35"/><path d="M9 143.4 L10.6 142.6 M10 145 L11.4 144.2" stroke="#555" stroke-width="0.5"/><path d="M11 146.8 L12.2 145.6 L13.6 149.8 Z" fill="#2a2a2a"/>
<!-- pencil 157.5 -->
<path d="M6.8 153.2 L9.2 152 L12.4 157.8 L10 159.2 Z" fill="#f6f6f6" stroke="#555" stroke-width="0.3"/><path d="M10 159.2 L12.4 157.8 L13.4 162.4 Z" fill="#1e1e1e"/><path d="M8.4 156.4 L10.8 155" stroke="#666" stroke-width="0.6"/><path d="M10.6 159.8 L12.6 158.6" stroke="#ccc" stroke-width="0.5"/>
<!-- brush 171 -->
<path d="M14.2 166 L14.8 166.6 L9.6 172.2 L8.6 171.4 Z" fill="#2a2a2a"/><path d="M8.6 171.2 L9.8 172.4 L8.2 174.6 L5.6 175 Q7 173.4 7.2 172 Z" fill="#f2f2f2" stroke="#555" stroke-width="0.3"/><path d="M7 174.6 L12.6 175.2 L9 173 Z" fill="#4aa8e8" opacity="0.9"/>
<!-- airbrush 184 -->
<ellipse cx="8.8" cy="186.8" rx="3.4" ry="2.8" fill="#f2f2f2" stroke="#555" stroke-width="0.3"/><path d="M5.6 186 h6.4 M5.6 187.6 h6.4" stroke="#2a2a2a" stroke-width="0.6"/><path d="M7.6 183.8 h2.6 v-1.6 h-2.6 Z" fill="#2a2a2a"/><path d="M10.6 182.6 L15 180 M10.6 183 L15.4 182.8 M10.6 183.4 L15 185.4" stroke="#444" stroke-width="0.35"/>
<!-- decoration 197 -->
<path d="M8.6 192.4 L9.2 195.8 L12.4 196.4 L9.2 197 L8.6 200.4 L8 197 L4.8 196.4 L8 195.8 Z" fill="#2a2a2a"/><path d="M12.6 197.6 L13 199.4 L14.8 199.8 L13 200.2 L12.6 202 L12.2 200.2 L10.4 199.8 L12.2 199.4 Z" fill="#2a2a2a"/>
<!-- eraser 210 -->
<path d="M8 206.6 L13.8 206 L14.6 209 L8.8 210 Z" fill="#f2f2f2" stroke="#555" stroke-width="0.3"/><path d="M6.2 210.4 L12.4 209.6 L13.2 212.4 L7 213.6 Z" fill="#f2f2f2" stroke="#555" stroke-width="0.3"/><path d="M8.8 210 L14.6 209 L13.2 212.4 L12.4 209.6 Z" fill="#888"/>
<!-- blend 223 -->
<path d="M8.4 218.4 Q11.6 222 11 224.6 Q10.4 227 8 227 Q5.4 227 5.6 224.4 Q6 222 8.4 218.4 Z" fill="#2a2a2a"/><path d="M12.4 218.8 Q15.6 222.4 15 224.8 Q14.4 227 12 227 Q9.4 227 9.6 224.6 Q10 222.4 12.4 218.8 Z" fill="#f2f2f2" stroke="#666" stroke-width="0.3"/>
<!-- fill 237.5 -->
<path d="M7.4 236.6 L11.4 233.8 L15 237.6 L11.6 241.4 L8.8 241 Z" fill="#f2f2f2" stroke="#444" stroke-width="0.4"/><path d="M6 239.8 Q5.6 237 8.4 235.6 L9.6 237.6 Q7.4 238 7.4 240.4 Z" fill="#2a2a2a"/><path d="M8.6 234.8 L12.4 233 L13.4 234.4" stroke="#2a2a2a" stroke-width="0.7" fill="none"/><path d="M8.4 237.6 L13.6 238.4" stroke="#999" stroke-width="0.5"/>
<!-- gradient 250.5 -->
<rect x="6.6" y="246.8" width="7.4" height="7.4" fill="url(#gg)" stroke="#333" stroke-width="0.3"/>
<!-- line 263.75 -->
<path d="M6.2 267.6 L14.6 259.8" stroke="#2a2a2a" stroke-width="0.8"/>
<!-- frame 277 -->
<rect x="6.2" y="272.4" width="6.6" height="9" fill="none" stroke="#2a2a2a" stroke-width="0.6"/><path d="M6.2 275.6 h6.6 M9.6 275.6 v5.8 M6.2 278.4 h3.4" stroke="#2a2a2a" stroke-width="0.5"/>
<!-- ruler 290 -->
<path d="M6.4 286.4 L12.6 292.8 L6.4 292.8 Z" fill="#3aa0ea" stroke="#2277bb" stroke-width="0.3"/><path d="M8 290 L9.6 291.6 L8 291.6 Z" fill="#7b7c80"/>
<!-- balloon 315.5 -->
<ellipse cx="10.2" cy="314.6" rx="4.4" ry="3.2" fill="#f6f6f6" stroke="#aaa" stroke-width="0.3"/><path d="M11.8 317 L13.4 319 L13 316.6 Z" fill="#f6f6f6"/>
<!-- correct line 328.75 -->
<path d="M6.4 324.6 L11.8 324.6 M6.4 324.6 L6.4 331.6" stroke="#2a2a2a" stroke-width="0.7" fill="none"/><path d="M8.6 325.8 L14.6 329 L12 329.6 L11 332.4 Z" fill="#2a2a2a"/><path d="M10.2 327.6 L12.6 328.9 L11.6 329.2 L11.2 330.4 Z" fill="#eee"/>
<defs><linearGradient id="gg" x1="1" y1="0" x2="0" y2="1"><stop offset="0" stop-color="#fff"/><stop offset="0.45" stop-color="#888"/><stop offset="1" stop-color="#000"/></linearGradient></defs>
</svg>
<div class="t" style="left:6.2px;top:297px;font-family:'Liberation Serif',serif;font-weight:bold;font-size:12px;line-height:12px;color:#1e1e1e">A</div>
<!-- palette colour swatches -->
<div class="a" style="left:8.8px;top:343.8px;width:10.8px;height:10.8px;background:#fff;border:0.5px solid #666"></div>
<div class="a" style="left:1.6px;top:336.8px;width:11px;height:11px;background:#060606;border:0.9px solid #7fc0ea"></div>
<svg style="left:2px;top:356px" width="17.5" height="4.6" viewBox="0 0 17.5 4.6"><rect width="17.5" height="4.6" fill="#fff"/><rect x="2.30" y="0.00" width="2.30" height="2.30" fill="#7e7e7e"/><rect x="6.90" y="0.00" width="2.30" height="2.30" fill="#7e7e7e"/><rect x="11.50" y="0.00" width="2.30" height="2.30" fill="#7e7e7e"/><rect x="16.10" y="0.00" width="1.40" height="2.30" fill="#7e7e7e"/><rect x="0.00" y="2.30" width="2.30" height="2.30" fill="#7e7e7e"/><rect x="4.60" y="2.30" width="2.30" height="2.30" fill="#7e7e7e"/><rect x="9.20" y="2.30" width="2.30" height="2.30" fill="#7e7e7e"/><rect x="13.80" y="2.30" width="2.30" height="2.30" fill="#7e7e7e"/></svg>
<!-- ===== CENTER ===== -->
<div class="a" id="center" style="left:126.5px;top:23.5px;width:692.5px;height:495.5px;background:#404040"></div>
<!-- command bar -->
<div class="a" style="left:126.2px;top:23.5px;width:692.6px;height:13.3px;background:#78797d;border-top:0.8px solid #5a5a5c"></div>
<div class="a" style="left:127.3px;top:25.2px;width:19.8px;height:10.8px;background:#8a8b8f;border-radius:1px"></div>
<svg style="left:126px;top:24px" width="260" height="13" viewBox="126 24 260 13">
<path d="M137.2 30.6 q1.2 -0.9 1.9 0.1 q0.5 1.5 -1.8 1.7 q-2.7 0 -2.7 -1.9 q0.2 -2.1 3.3 -2.1 q3.7 0.2 3.5 2.5 q-0.4 2.5 -4.3 2.5 q-3.7 -0.2 -3.5 -2.7" fill="none" stroke="#4c4d50" stroke-width="0.7"/>
<path d="M150.2 25.6v10M195.6 25.6v10M223.8 25.6v10M278 25.6v10M315 25.6v10M355.6 25.6v10" stroke="#656669" stroke-width="0.5"/>
<!-- new -->
<path d="M153.4 26 h3.8 v1.4 h-2.4 v6 h-1.4Z" fill="#e8e8e8" stroke="#1e1e1e" stroke-width="0.6"/><path d="M155 27.2 h3.4 l2.4 2.4 v5.6 h-5.8 Z" fill="#f4f4f4" stroke="#1e1e1e" stroke-width="0.7"/><path d="M158.4 27.2 v2.4 h2.4" fill="none" stroke="#1e1e1e" stroke-width="0.6"/>
<!-- open -->
<path d="M164.8 29.2 h8.8 v5.8 h-8.8 Z" fill="#f4f4f4" stroke="#1e1e1e" stroke-width="0.8"/><path d="M165.2 29.2 v-1.8 h3.2 l0.8 0.9 h3.8 v0.9" fill="#d8d8d8" stroke="#1e1e1e" stroke-width="0.7"/><path d="M169.2 26.8 q1.8 -1.8 3.8 -0.2 l-0.2 -1 M173 26.6 l-1.2 0.2" stroke="#1e1e1e" stroke-width="0.6" fill="none"/>
<!-- save -->
<path d="M177.2 26.2 h7.4 v9 h-7.4 Z" fill="#1e1e1e"/><rect x="178.3" y="26.2" width="5.2" height="5.8" fill="#f4f4f4"/><rect x="179" y="33" width="3.8" height="2.2" fill="#4a4a4a"/>
<path d="M188.6 29.6 h4.2 l-2.1 2.5 Z" fill="#1e1e1e"/>
<!-- undo / redo -->
<path d="M201.8 28 h4.6 q2 0.2 2 2 q0 2 -2 2.1 h-3.4" fill="none" stroke="#1e1e1e" stroke-width="1.3"/><path d="M199.8 32.1 l3 -2.3 v4.6 Z" fill="#1e1e1e"/>
<path d="M218.6 28 h-4.6 q-2 0.2 -2 2 q0 2 2 2.1 h3.4" fill="none" stroke="#5a5b5e" stroke-width="1.2"/><path d="M220.6 32.1 l-3 -2.3 v4.6 Z" fill="#5a5b5e"/>
<!-- clear -->
<g fill="#1e1e1e"><rect x="231.3" y="26.2" width="1.5" height="1.5"/><rect x="231.3" y="33.4" width="1.5" height="1.5"/><rect x="227.7" y="29.8" width="1.5" height="1.5"/><rect x="234.9" y="29.8" width="1.5" height="1.5"/><rect x="228.7" y="27.2" width="1.4" height="1.4"/><rect x="234" y="27.2" width="1.4" height="1.4"/><rect x="228.7" y="32.5" width="1.4" height="1.4"/><rect x="234" y="32.5" width="1.4" height="1.4"/></g>
<!-- faded cross -->
<path d="M241.6 26.6 h4 v2.2 h2.2 v4 h-2.2 v2.2 h-4 v-2.2 h-2.2 v-4 h2.2 Z" fill="#8d8e91" stroke="#747578" stroke-width="0.4"/><rect x="242.2" y="29.4" width="2.8" height="2.8" fill="#9a9b9e"/>
<!-- fill bucket -->
<path d="M253.4 29.6 L257 27 L260.4 30.4 L257 34 L254.6 33.6 Z" fill="#f4f4f4" stroke="#333" stroke-width="0.4"/><path d="M252 32.6 Q251.6 30 254.4 28.6 L255.6 30.4 Q253.4 31 253.4 33.4 Z" fill="#1e1e1e"/><path d="M254.6 27.8 L258 26.2 L259 27.6" stroke="#1e1e1e" stroke-width="0.8" fill="none"/>
<!-- transform -->
<rect x="265.6" y="28" width="4.8" height="4.8" fill="none" stroke="#1e1e1e" stroke-width="1"/><path d="M265.6 28 l-1.9 -1.9 M270.4 28 l1.9 -1.9 M265.6 32.8 l-1.9 1.9 M270.4 32.8 l1.9 1.9" stroke="#1e1e1e" stroke-width="1.1"/>
<!-- 3 faded -->
<rect x="282" y="26.8" width="7" height="7" fill="#7c7d80" stroke="#696a6d" stroke-width="0.4"/><path d="M282.6 33.2 L288.4 27.4" stroke="#66676a" stroke-width="0.7"/>
<rect x="292.6" y="26.8" width="7" height="7" fill="#7c7d80" stroke="#696a6d" stroke-width="0.4"/><path d="M293.2 33.2 L299 27.4 L299 33.2Z" fill="#6b6c6f"/>
<rect x="303.6" y="26.8" width="7" height="7" fill="#7c7d80" stroke="#696a6d" stroke-width="0.4"/><rect x="305.4" y="28.6" width="3.4" height="3.4" fill="#8e8f92"/>
<!-- snap buttons -->
<rect x="318" y="25.2" width="10.6" height="10.6" fill="#5e5f63"/><rect x="330" y="25.2" width="10.6" height="10.6" fill="#5e5f63"/>
<path d="M326.4 26.2 V33.4" stroke="#161616" stroke-width="1.3"/><path d="M320.4 28.6 L325.8 33.6" stroke="#161616" stroke-width="0.9"/><path d="M319.8 30 V33.8 H325.4" stroke="#2f8fe0" stroke-width="1" fill="none" stroke-dasharray="1.2 0.6"/>
<path d="M332 33 L338.6 28 V33 Z" fill="none" stroke="#161616" stroke-width="0.9"/><path d="M331.6 34.2 h7.6" stroke="#2f8fe0" stroke-width="1.1" stroke-dasharray="1.4 0.6"/><path d="M333.6 31.8 L338 28.6" stroke="#2f8fe0" stroke-width="0.6"/>
<path d="M348 26 v8.6" stroke="#161616" stroke-width="1.2"/><path d="M345.6 27.2 v3 M350.4 30.8 v3" stroke="#2f8fe0" stroke-width="1"/><path d="M344 28.6 l1.6 -2.4 1.6 2.4Z M348.8 32.4 l1.6 2.4 1.6 -2.4Z" fill="#2f8fe0"/><path d="M344.4 31.4 h2.4 M349.2 29.6 h2.4" stroke="#2f8fe0" stroke-width="0.8"/>
<!-- help -->
<rect x="358" y="25.6" width="19.8" height="9.6" rx="1" fill="#e6e6e8"/><circle cx="367.8" cy="30.1" r="3.7" fill="#2a2a2a"/><path d="M366.4 33 l1 2 1.4 -2Z" fill="#2a2a2a"/>
</svg>
<div class="t" style="left:366.2px;top:26.4px;font-size:6.6px;font-weight:bold;color:#f2f2f2;line-height:7px">?</div>
<!-- document tab row -->
<div class="a" style="left:126.2px;top:36.8px;width:692.6px;height:10.4px;background:linear-gradient(#484848,#4e4e4e)"></div>
<div class="a" style="left:126.6px;top:37.8px;width:48.6px;height:9.6px;background:linear-gradient(#8c8d90,#77787b);border-radius:1px 1px 0 0"></div>
<div class="t" style="left:128.2px;top:38.8px;font-size:6.4px;letter-spacing:-0.38px;color:#cbcbcd;line-height:7px">Illustration5*</div>
<div class="a" style="left:169.5px;top:41.2px;width:2.8px;height:2.8px;border-radius:50%;background:#222"></div>
<!-- canvas paper -->
<svg id="paper" style="left:330px;top:165px" width="280" height="210" viewBox="330 165 280 210"><rect x="340.35" y="173.35" width="258.15" height="193.7" fill="#fff"/></svg>
<!-- v scrollbar -->
<div class="a" style="left:812.6px;top:36.8px;width:5.6px;height:456px;background:#5a5a5c"></div>
<div class="a" style="left:812.8px;top:37.4px;width:5.2px;height:8.6px;background:#77787b;border:0.4px solid #8e8f92"></div>
<div class="a" style="left:812.8px;top:48.8px;width:5.2px;height:5px;background:#77787b;border:0.4px solid #8e8f92"></div>
<div class="a" style="left:812.8px;top:54px;width:5.2px;height:432px;background:linear-gradient(to right,#606163,#68696c)"></div><div class="a" style="left:812.7px;top:54px;width:5.4px;height:327px;background:linear-gradient(to right,#7c7d80,#727376);border-bottom:0.6px solid #8a8b8e"></div>
<div class="a" style="left:812.8px;top:486px;width:5.2px;height:5.6px;background:#77787b;border:0.4px solid #8e8f92"></div><div class="a" style="left:812.6px;top:492.6px;width:5.6px;height:6px;background:#6c6d70"></div>
<svg style="left:812.6px;top:36.8px" width="6" height="460" viewBox="0 0 6 460"><path d="M1.6 3.8 L2.8 5.4 L4 3.8Z M1.6 15.2 L2.8 13.6 L4 15.2Z M1.6 451.2 L2.8 452.8 L4 451.2Z" fill="#2a2a2a"/></svg>
<!-- status bar -->
<div class="a" style="left:126.2px;top:492.8px;width:686.4px;height:6.6px;background:#6a6b6e"></div>
<div class="a" style="left:292px;top:493.2px;width:516px;height:5.8px;background:#5d5e61;border-bottom:0.7px solid #8a8b8e"></div>
<div class="a" style="left:413px;top:493.2px;width:272.4px;height:5.8px;background:linear-gradient(#808185,#727377)"></div>
<div class="t" style="left:127.8px;top:492.8px;font-size:5.8px;letter-spacing:-0.25px;color:#e8e8e8;line-height:6.4px;z-index:3">32.3</div>
<div class="t" style="left:209.6px;top:492.8px;font-size:5.8px;letter-spacing:-0.25px;color:#e8e8e8;line-height:6.4px;z-index:3">0.0</div>
<svg style="left:126px;top:492.8px" width="690" height="7" viewBox="126 0 690 7">
<rect x="127" y="0.3" width="48.6" height="6" fill="#77787b"/><path d="M127 6.2 L175.6 0.5 L175.6 6.2 Z" fill="#47474a"/><path d="M148.8 0.2v6.2" stroke="#9c9da0" stroke-width="0.6"/>
<rect x="176.2" y="0.3" width="9.4" height="6" fill="#7a7b7e" stroke="#58595b" stroke-width="0.4"/><rect x="186.4" y="0.3" width="9.6" height="6" fill="#7a7b7e" stroke="#58595b" stroke-width="0.4"/>
<circle cx="181" cy="3.3" r="2" fill="#ececec"/><path d="M179.8 3.3h2.4" stroke="#222" stroke-width="0.6"/><circle cx="191.4" cy="3.3" r="2" fill="#ececec"/><path d="M190.2 3.3h2.4M191.4 2.1v2.4" stroke="#222" stroke-width="0.6"/>
<rect x="198.4" y="0.2" width="6.4" height="6.3" fill="#141414"/><rect x="200.2" y="1.9" width="2.8" height="2.8" fill="none" stroke="#3c3c3c" stroke-width="0.5"/>
<path d="M206.4 0.4v6" stroke="#8a8b8e" stroke-width="0.5"/>
<rect x="207.6" y="0.3" width="48.4" height="6" fill="#6e6f72"/><path d="M207.6 1.6 Q216 6 232 5.6 L232 6.3 L207.6 6.3Z" fill="#4e4e51"/><path d="M232.4 6.3 L244 0.8 L256 6.3 Z" fill="#47474a"/><path d="M232.2 0.2v6.2" stroke="#9c9da0" stroke-width="0.6"/>
<rect x="257" y="0.3" width="9" height="6" fill="#7a7b7e" stroke="#58595b" stroke-width="0.4"/><rect x="266.6" y="0.3" width="9" height="6" fill="#7a7b7e" stroke="#58595b" stroke-width="0.4"/><rect x="276.2" y="0.3" width="8.8" height="6" fill="#77787b" stroke="#58595b" stroke-width="0.4"/>
<path d="M259.4 5.4 q-0.6 -4 2.2 -4 q2.6 0 2 4" fill="none" stroke="#1e1e1e" stroke-width="1"/><path d="M269 5.4 q-0.6 -4 2.2 -4 q2.6 0 2 4" fill="none" stroke="#1e1e1e" stroke-width="1"/>
<circle cx="280.6" cy="3.4" r="1.9" fill="none" stroke="#505153" stroke-width="0.6" stroke-dasharray="0.8 0.6"/>
<rect x="286" y="0.3" width="5.8" height="6" fill="#7a7b7e" stroke="#58595b" stroke-width="0.4"/><path d="M289.8 1.9 L288 3.4 L289.8 4.9Z" fill="#222"/>
<rect x="808" y="0.3" width="4.6" height="6" fill="#77787b" stroke="#8e8f92" stroke-width="0.4"/><path d="M809.6 2 L811.2 3.4 L809.6 4.8Z" fill="#222"/>
<path d="M548 2.4v2M549 2.4v2M550 2.4v2" stroke="#5a5a5c" stroke-width="0.4"/>
</svg>
<!-- timeline strip -->
<div class="a" style="left:126.2px;top:499.4px;width:692.8px;height:19.6px;background:#5d5d5e"></div>
<div class="a" style="left:126.4px;top:500px;width:10.4px;height:18.6px;background:#666769;border-right:0.5px solid #4c4c4e"></div>
<div class="a" style="left:137.8px;top:500.7px;width:19.4px;height:16.6px;background:#77787b;border:0.5px solid #555658"></div>
<div class="a" style="left:159.9px;top:500.7px;width:19.4px;height:16.6px;background:#77787b;border:0.5px solid #555658"></div>
<svg style="left:126px;top:499.4px" width="60" height="20" viewBox="126 0 60 20">
<path d="M129 5.6 L131.6 3.2 L134.2 5.6" fill="none" stroke="#a4a5a8" stroke-width="1"/><path d="M129 12.6 L131.6 14.8 L134.2 12.6 M129 15.2 L131.6 17.4 L134.2 15.2" fill="none" stroke="#a4a5a8" stroke-width="1"/>
<rect x="142.4" y="6.4" width="10.2" height="6.2" fill="#f0f0f0" stroke="#333" stroke-width="0.4"/><path d="M144.4 6.4v6.2M146.4 6.4v6.2M148.4 6.4v6.2" stroke="#333" stroke-width="0.6"/><rect x="149.6" y="9" width="3" height="2.6" fill="#4a90d0"/>
<rect x="165" y="7" width="7.6" height="5" fill="#151515" stroke="#eee" stroke-width="0.7"/><path d="M173 9.4 L175.4 7.6 V11.4 Z" fill="#151515" stroke="#eee" stroke-width="0.5"/>
</svg>
<!-- ===== RIGHT DOCK ===== -->
<div class="a" id="rightdock" style="left:819px;top:23.5px;width:141px;height:495.5px;background:#5b5b5c"></div>
<div class="a" style="left:818.8px;top:34px;width:1px;height:485px;background:#4e4e50"></div><div class="a" style="left:819.4px;top:23.5px;width:19.4px;height:10.8px;background:linear-gradient(#4b4b4b,#666)"></div>
<div class="a" style="left:840px;top:23.5px;width:120px;height:10.8px;background:linear-gradient(#4b4b4b,#666)"></div>
<div class="a" style="left:838.2px;top:34.4px;width:1.7px;height:484.6px;background:#6e6f72"></div>
<div class="a" style="left:956px;top:34.4px;width:4px;height:484.6px;background:#7a7b7f;border-left:0.7px solid #58595c"></div>
<div class="a" style="left:953px;top:45.6px;width:3px;height:82.6px;background:#3e3e40;z-index:2"></div>

<svg style="left:819px;top:23.5px" width="141" height="260" viewBox="819 23.5 141 260">
<path d="M824.2 26.6 L822.6 29 L824.2 31.4" stroke="#b4b4b6" stroke-width="1.1" fill="none"/>
<path d="M832.6 26.6 L834.2 29 L832.6 31.4 M834.8 26.6 L836.4 29 L834.8 31.4" stroke="#b4b4b6" stroke-width="1.1" fill="none"/>
<path d="M842 26.8v4.4M843.8 26.8v4.4" stroke="#777" stroke-width="0.5"/>
<path d="M943 26.6 L944.6 29 L943 31.4" stroke="#b4b4b6" stroke-width="1.1" fill="none"/>
<path d="M953.6 26.6 L955.2 29 L953.6 31.4 M955.8 26.6 L957.4 29 L955.8 31.4" stroke="#b4b4b6" stroke-width="1.1" fill="none"/>
<!-- Q icon -->
<rect x="821" y="35.5" width="16" height="18.4" fill="#727376" stroke="#505052" stroke-width="0.6"/><rect x="821" y="57.5" width="16" height="18.4" fill="#727376" stroke="#505052" stroke-width="0.6"/><rect x="821" y="79.5" width="16" height="18.4" fill="#727376" stroke="#505052" stroke-width="0.6"/><rect x="821" y="101.5" width="16" height="18.4" fill="#727376" stroke="#505052" stroke-width="0.6"/><rect x="821" y="123.5" width="16" height="18.4" fill="#727376" stroke="#505052" stroke-width="0.6"/><rect x="821" y="145.5" width="16" height="18.4" fill="#727376" stroke="#505052" stroke-width="0.6"/><rect x="821" y="167.5" width="16" height="18.4" fill="#727376" stroke="#505052" stroke-width="0.6"/><rect x="821" y="189.5" width="16" height="18.4" fill="#727376" stroke="#505052" stroke-width="0.6"/><rect x="821" y="211.5" width="16" height="18.4" fill="#727376" stroke="#505052" stroke-width="0.6"/><rect x="821" y="233.5" width="16" height="18.4" fill="#727376" stroke="#505052" stroke-width="0.6"/><rect x="821" y="255.5" width="16" height="18.4" fill="#727376" stroke="#505052" stroke-width="0.6"/>
<circle cx="829" cy="45.2" r="6" fill="url(#qg)" stroke="#1c1c1c" stroke-width="1.4"/><path d="M829 45 L834.8 51.2" stroke="#1c1c1c" stroke-width="1.5"/><path d="M827.8 43.8 h4 l-4 4Z" fill="#1c1c1c"/>
<path d="M823 63.3 q0.3 -1.3 1.5 -1.3 h1.3 q1.1 0.1 1.3 1.3 q0 3.2 -2.7 5.4 q-1.4 -2 -1.4 -5.4Z" fill="url(#fg)"/><path d="M822.6 66.9 V63.1 q0.3 -1.5 1.7 -1.5 h1.5 q1.1 0 1.5 1.1 h2.9" fill="none" stroke="#2a2a2a" stroke-width="0.75"/><rect x="827" y="64.9" width="8" height="7.4" fill="#3f97e6"/><rect x="829.4" y="67.1" width="3.2" height="3" fill="#9cc8ee"/><path d="M827.8 65.7 l6.4 5.8 M834.2 65.7 l-6.4 5.8" stroke="#f2e488" stroke-width="1.2"/>
<path d="M823 85.3 q0.3 -1.3 1.5 -1.3 h1.3 q1.1 0.1 1.3 1.3 q0 3.2 -2.7 5.4 q-1.4 -2 -1.4 -5.4Z" fill="url(#fg)"/><path d="M822.6 88.9 V85.1 q0.3 -1.5 1.7 -1.5 h1.5 q1.1 0 1.5 1.1 h2.9" fill="none" stroke="#2a2a2a" stroke-width="0.75"/><rect x="827.6" y="87.1" width="7.4" height="7" fill="#f4f4f4" stroke="#1e1e1e" stroke-width="0.8"/><path d="M829.4 88.9 h3.2 v0 M829.4 88.9 v3.2 M829.8 89.3 l3.8 3.6" stroke="#1e1e1e" stroke-width="1.1" fill="none"/>
<path d="M823 107.3 q0.3 -1.3 1.5 -1.3 h1.3 q1.1 0.1 1.3 1.3 q0 3.2 -2.7 5.4 q-1.4 -2 -1.4 -5.4Z" fill="url(#fg)"/><path d="M822.6 110.9 V107.1 q0.3 -1.5 1.7 -1.5 h1.5 q1.1 0 1.5 1.1 h2.9" fill="none" stroke="#2a2a2a" stroke-width="0.75"/><rect x="827.4" y="109.1" width="7.6" height="7.2" fill="#8e8f92" stroke="#5e5f62" stroke-width="0.4"/><path d="M827.8 109.5 l6.8 6.4 M834.6 109.5 l-6.8 6.4" stroke="#e4e4e4" stroke-width="0.8"/><path d="M831.2 109.9 v5.8 M828.2 112.7 h6" stroke="#c0c0c2" stroke-width="0.4"/>
<path d="M823 129.3 q0.3 -1.3 1.5 -1.3 h1.3 q1.1 0.1 1.3 1.3 q0 3.2 -2.7 5.4 q-1.4 -2 -1.4 -5.4Z" fill="url(#fg)"/><path d="M822.6 132.9 V129.1 q0.3 -1.5 1.7 -1.5 h1.5 q1.1 0 1.5 1.1 h2.9" fill="none" stroke="#2a2a2a" stroke-width="0.75"/><rect x="827.4" y="131.1" width="7.6" height="7.4" fill="#8e8f92" stroke="#3a3a3c" stroke-width="0.5" stroke-dasharray="0.9 0.9"/>
<path d="M823 151.3 q0.3 -1.3 1.5 -1.3 h1.3 q1.1 0.1 1.3 1.3 q0 3.2 -2.7 5.4 q-1.4 -2 -1.4 -5.4Z" fill="url(#fg)"/><path d="M822.6 154.9 V151.1 q0.3 -1.5 1.7 -1.5 h1.5 q1.1 0 1.5 1.1 h2.9" fill="none" stroke="#2a2a2a" stroke-width="0.75"/><rect x="828" y="152.3" width="6.8" height="8.2" fill="#f4f4f4" stroke="#1e1e1e" stroke-width="0.6"/><path d="M829.2 154.3h4.4M829.2 156.3h4.4M829.2 158.3h4.4" stroke="#1e1e1e" stroke-width="1" stroke-dasharray="1.3 0.5"/>
<path d="M823 173.3 q0.3 -1.3 1.5 -1.3 h1.3 q1.1 0.1 1.3 1.3 q0 3.2 -2.7 5.4 q-1.4 -2 -1.4 -5.4Z" fill="url(#fg)"/><path d="M822.6 176.9 V173.1 q0.3 -1.5 1.7 -1.5 h1.5 q1.1 0 1.5 1.1 h2.9" fill="none" stroke="#2a2a2a" stroke-width="0.75"/><path d="M827.6 175.5 l2.2 2.2 M835 175.5 l-2.2 2.2 M827.6 182.3 l2.2 -2.2 M835 182.3 l-2.2 -2.2" stroke="#1e1e1e" stroke-width="0.9"/><path d="M830.4 178.1 h-1.8 M830.4 178.1 v-1.8 M832.2 178.1 h1.8 M832.2 178.1 v-1.8 M830.4 179.7 h-1.8 M830.4 179.7 v1.8 M832.2 179.7 h1.8 M832.2 179.7 v1.8" stroke="#1e1e1e" stroke-width="0.6" fill="none"/>
<path d="M823 195.3 q0.3 -1.3 1.5 -1.3 h1.3 q1.1 0.1 1.3 1.3 q0 3.2 -2.7 5.4 q-1.4 -2 -1.4 -5.4Z" fill="url(#fg)"/><path d="M822.6 198.9 V195.1 q0.3 -1.5 1.7 -1.5 h1.5 q1.1 0 1.5 1.1 h2.9" fill="none" stroke="#2a2a2a" stroke-width="0.75"/><rect x="827.6" y="197.5" width="7.4" height="6.8" fill="#f4f4f4" stroke="#1e1e1e" stroke-width="0.7"/><path d="M828.4 203.7 l1.8 -3.2 1.2 1.6 1.4 -2.6 1.6 4.2Z" fill="#1e1e1e"/>
<path d="M823 217.3 q0.3 -1.3 1.5 -1.3 h1.3 q1.1 0.1 1.3 1.3 q0 3.2 -2.7 5.4 q-1.4 -2 -1.4 -5.4Z" fill="url(#fg)"/><path d="M822.6 220.9 V217.1 q0.3 -1.5 1.7 -1.5 h1.5 q1.1 0 1.5 1.1 h2.9" fill="none" stroke="#2a2a2a" stroke-width="0.75"/><rect x="827.6" y="219.5" width="7.4" height="6.8" fill="#f4f4f4" stroke="#1e1e1e" stroke-width="0.7"/><path d="M828.6 225.5 l5.6 -5 0 5Z" fill="#1e1e1e"/>
<path d="M823 239.3 q0.3 -1.3 1.5 -1.3 h1.3 q1.1 0.1 1.3 1.3 q0 3.2 -2.7 5.4 q-1.4 -2 -1.4 -5.4Z" fill="url(#fg)"/><path d="M822.6 242.9 V239.1 q0.3 -1.5 1.7 -1.5 h1.5 q1.1 0 1.5 1.1 h2.9" fill="none" stroke="#2a2a2a" stroke-width="0.75"/><circle cx="831.4" cy="244.9" r="3.5" fill="#f4f4f4" stroke="#1e1e1e" stroke-width="0.7"/><path d="M829.4 243.7 l2 -0.9 2 0.9 v2.4 l-2 0.9 -2 -0.9Z M831.4 244.5 v2.6 M829.4 243.7 l2 0.8 2 -0.8" fill="none" stroke="#555" stroke-width="0.4"/>
<path d="M823 261.3 q0.3 -1.3 1.5 -1.3 h1.3 q1.1 0.1 1.3 1.3 q0 3.2 -2.7 5.4 q-1.4 -2 -1.4 -5.4Z" fill="url(#fg)"/><path d="M822.6 264.9 V261.1 q0.3 -1.5 1.7 -1.5 h1.5 q1.1 0 1.5 1.1 h2.9" fill="none" stroke="#2a2a2a" stroke-width="0.75"/><path d="M831.2 263.5 v7.2 M829 266.1 h4.4 M831.2 268.5 l-1.4 2.4 M831.2 268.5 l1.4 2.4" stroke="#1e1e1e" stroke-width="0.8"/><circle cx="831.2" cy="262.7" r="1" fill="#1e1e1e"/>
<defs><linearGradient id="fg" x1="0" y1="0" x2="1" y2="1"><stop offset="0" stop-color="#e8e8ea"/><stop offset="1" stop-color="#8a8b8e"/></linearGradient><radialGradient id="qg" cx="0.4" cy="0.35"><stop offset="0" stop-color="#a9aaad"/><stop offset="1" stop-color="#77787b"/></radialGradient></defs>
</svg>
<!-- ===== Navigator ===== -->
<div class="a tabrow" style="left:839.8px;top:34.4px;width:118px;height:8.4px"></div>
<div class="a" style="left:841.2px;top:35.4px;width:7.2px;height:5.8px;background:#5f5f61;border:0.5px solid #484848"></div>
<div class="tab" style="left:849.6px;top:35px;width:34.2px;height:8px"></div>
<div class="tabi" style="left:885.4px;top:35.4px;width:13.4px;height:7.4px"></div>
<div class="tabi" style="left:899.8px;top:35.4px;width:13px;height:7.4px"></div>
<div class="tabi" style="left:913.6px;top:35.4px;width:12.8px;height:7.4px"></div>
<div class="a pbg" style="left:839.8px;top:42.6px;width:116px;height:108.4px"></div>
<div class="a" style="left:839.9px;top:45.6px;width:3.2px;height:82.6px;background:#3e3e40"></div>
<svg id="navimg" style="left:840px;top:44px" width="116" height="86" viewBox="840 44 116 86"><rect x="843.05" y="45.8" width="109.9" height="82.4" fill="#fff"/></svg>
<svg style="left:840px;top:34px" width="116" height="12" viewBox="840 34 116 12">
<path d="M843.4 36.8 L845.2 38.2 L843.4 39.6Z" fill="#a4a4a6"/><path d="M846.4 36.8v2.8" stroke="#a4a4a6" stroke-width="0.7" fill="none"/>
<rect x="851.6" y="36" width="5.8" height="4.8" rx="0.8" fill="#f6f6f6" stroke="#e02030" stroke-width="1"/><path d="M853.4 41.4 h3" stroke="#c02030" stroke-width="0.6"/><rect x="855.4" y="39.2" width="3.6" height="3" fill="#e8e8e8" stroke="#888" stroke-width="0.3"/>
<rect x="889.2" y="37.4" width="5.4" height="3.4" fill="#b4b4b6"/><rect x="890.2" y="38.2" width="2" height="1.8" fill="#555"/>
<path d="M903 41 l2 -3 1.4 1.6 1.2 -1.2 1.4 2.6Z" fill="#9a9a9c"/><circle cx="907.6" cy="37.4" r="0.7" fill="#9a9a9c"/>
<path d="M920 36.6v4.8" stroke="#dcdcdc" stroke-width="0.8"/><path d="M918.8 37.8 l1.2 -1.5 1.2 1.5Z M918.8 40.2 l1.2 1.5 1.2 -1.5Z" fill="#dcdcdc"/>
</svg>
<div class="t" style="left:861.8px;top:36.2px;font-size:5.3px;letter-spacing:-0.22px;color:#e4e4e4;line-height:6px">Navigator</div>
<!-- nav controls -->
<svg style="left:840px;top:128px" width="116" height="24" viewBox="840 128 116 24">
<rect x="842.6" y="132.2" width="39" height="6.2" fill="#727376" stroke="#5a5b5d" stroke-width="0.5"/><path d="M843.2 138 L881 132.8 L881 138 Z" fill="#3e3e41"/><path d="M859.6 130.6v9.4" stroke="#6a6b6e" stroke-width="1"/>
<rect x="842.6" y="142.2" width="39" height="6.2" fill="#727376" stroke="#5a5b5d" stroke-width="0.5"/><path d="M843.2 142.8 Q850 148.6 862.4 147 L862.4 148 L843.2 148 Z" fill="#3e3e41"/><path d="M862.4 148 L872 142.8 L881 148 Z" fill="#3e3e41"/><path d="M862.4 140.6v9.4" stroke="#6a6b6e" stroke-width="1"/>
<!-- zoom out/in -->
<circle cx="909" cy="134.2" r="2.8" fill="#e8e8ea" stroke="#2a2a2a" stroke-width="0.7"/><path d="M911 136.4 L913.4 139" stroke="#1e1e1e" stroke-width="1.4"/><path d="M907.6 134.2h2.8" stroke="#2a2a2a" stroke-width="0.6"/>
<circle cx="919" cy="134.2" r="2.8" fill="#e8e8ea" stroke="#2a2a2a" stroke-width="0.7"/><path d="M921 136.4 L923.4 139" stroke="#1e1e1e" stroke-width="1.4"/><path d="M917.6 134.2h2.8M919 132.8v2.8" stroke="#2a2a2a" stroke-width="0.6"/>
<rect x="925.8" y="131.6" width="7.6" height="7.2" fill="#101010"/><rect x="927.8" y="133.4" width="3.6" height="3.6" fill="none" stroke="#555" stroke-width="0.5"/>
<rect x="937.2" y="132.2" width="6.8" height="6" fill="#222"/><path d="M938 132.8h4M938 132.8v3M938.4 133.2 l5 5" stroke="#f0f0f0" stroke-width="0.8" fill="none"/><rect x="937.4" y="135.4" width="3" height="2.6" fill="#eee"/>
<rect x="947.2" y="132.2" width="7.6" height="6" fill="#f0f0f0" stroke="#222" stroke-width="0.6"/><path d="M948 132.8 l6 5" stroke="#222" stroke-width="1"/><path d="M947.2 132.2h7.6v1.4h-7.6Z" fill="#222"/>
<!-- rotate -->
<path d="M907.6 147.4 q-0.4 -4.6 3 -4.6 q3.4 0.2 2.8 5" fill="none" stroke="#1e1e1e" stroke-width="1.2"/><path d="M905.6 146 l2 2.4 1.8 -2.4Z" fill="#1e1e1e"/>
<path d="M916.8 147.8 q-0.6 -4.8 2.8 -5 q3.4 0 3 4.6" fill="none" stroke="#1e1e1e" stroke-width="1.2"/><path d="M920.8 146 l1.8 2.4 2 -2.4Z" fill="#1e1e1e"/>
<circle cx="929.6" cy="145.6" r="2.9" fill="none" stroke="#4a4a4c" stroke-width="0.8" stroke-dasharray="1 0.9"/>
<path d="M936 148 l0 -1.4" stroke="#66676a" stroke-width="0.6"/>
<path d="M939.4 148 q-1 -5 2.2 -5.4 q3.2 0.2 2.4 5.2" fill="none" stroke="#1e1e1e" stroke-width="1.1"/><path d="M941.6 144 v4.4 M940 146.6 l1.6 1.8 1.6 -1.8" stroke="#ddd" stroke-width="0.6" fill="none"/>
<path d="M953.6 143.6 q-4.6 -1.4 -5 2 q0.2 3 4 2.6" fill="none" stroke="#1e1e1e" stroke-width="1.1"/><path d="M952.4 142 l2.6 1.4 -2.2 1.8Z" fill="#1e1e1e"/><rect x="951.6" y="146.8" width="3" height="1.6" fill="#ddd"/>
</svg>
<div class="t" style="right:55.60000000000002px;top:131.4px;font-size:6.2px;letter-spacing:-0.3px;color:#ececec;line-height:7px">32.3</div>
<div class="t" style="right:55.60000000000002px;top:141.6px;font-size:6.2px;letter-spacing:-0.3px;color:#ececec;line-height:7px">0.0</div>

<!-- ===== Layer Property ===== -->
<div class="a tabrow" style="left:839.8px;top:152px;width:118px;height:8.4px"></div>
<div class="a" style="left:841.2px;top:153px;width:7.2px;height:5.8px;background:#5f5f61;border:0.5px solid #484848"></div>
<div class="tab" style="left:849.2px;top:152.6px;width:44.6px;height:8px"></div>
<div class="tabi" style="left:894.6px;top:153px;width:13.6px;height:7.4px"></div>
<div class="tabi" style="left:909px;top:153px;width:13.2px;height:7.4px"></div>
<div class="a pbg" style="left:839.8px;top:160.2px;width:116px;height:107.2px"></div>
<div class="a" style="left:951.2px;top:162.6px;width:4.8px;height:103px;background:#6a6b6e;border-left:0.5px solid #5b5b5d"></div>
<svg style="left:840px;top:152px" width="116" height="52" viewBox="840 152 116 52">
<path d="M843.4 154.6 L845.2 156 L843.4 157.4Z" fill="#a4a4a6"/><path d="M846.4 154.6v2.8" stroke="#a4a4a6" stroke-width="0.7" fill="none"/>
<path d="M852.4 157 L854 158.6 L858.6 153.8" stroke="#e01818" stroke-width="1" fill="none"/><path d="M851.4 160h7.6" stroke="#111" stroke-width="1.1"/>
<path d="M898 154.4 h4 l-1 2 h3 l-3 3.4 v-2.4 h-2Z" fill="#9a9b9e"/><path d="M897.6 159.4h7" stroke="#b8b8ba" stroke-width="0.5"/>
<path d="M915.6 154.4 l2 4.6 h-4Z" fill="#b4b5b8"/><path d="M912.6 159.4h6" stroke="#b8b8ba" stroke-width="0.5"/>
<!-- effect buttons -->
<rect x="895.2" y="171.4" width="54.4" height="9.2" rx="1" fill="#747579" stroke="#5c5d60" stroke-width="0.5"/><path d="M943 171.6v8.8" stroke="#5c5d60" stroke-width="0.4"/>
<circle cx="900.6" cy="176" r="3.8" fill="#f6f6f6"/><circle cx="900.6" cy="176" r="2.3" fill="#111"/>
<circle cx="912.8" cy="175.8" r="3.5" fill="#3a8ce6" stroke="#333" stroke-width="0.6"/><path d="M909.4 177.2 q3 3.4 6.4 0.4" stroke="#1a5aa8" stroke-width="1.1" fill="none"/>
<rect x="921" y="172.6" width="7" height="6.8" fill="#3a3a3a" stroke="#2a2a2a" stroke-width="0.6" stroke-dasharray="0.8 0.5"/>
<rect x="934" y="174" width="6" height="5.8" fill="#e4f0fa"/><rect x="932.4" y="172.2" width="6.2" height="6.2" fill="#58b2f6"/>
<path d="M944 175 h3.4 l-1.7 2.2Z" fill="#2a2a2a"/>
<path d="M844.4 170.6h104" stroke="#747578" stroke-width="0.4"/><path d="M844.4 189h104" stroke="#747578" stroke-width="0.4"/>
<!-- color dropdown -->
<rect x="847.6" y="191.4" width="75.6" height="9.2" rx="1" fill="url(#ddg)" stroke="#5c5d60" stroke-width="0.5"/>
<rect x="872" y="192.6" width="2.8" height="6.8" fill="#f07078"/><rect x="874.8" y="192.6" width="2.6" height="6.8" fill="#58a8f0"/><rect x="877.4" y="192.6" width="2.6" height="6.8" fill="#8cf08c"/>
<path d="M917.6 195 h3.6 l-1.8 2.2Z" fill="#2a2a2a"/>
<defs><linearGradient id="ddg" x1="0" y1="0" x2="0" y2="1"><stop offset="0" stop-color="#808185"/><stop offset="1" stop-color="#6e6f73"/></linearGradient></defs>
</svg>
<div class="t" style="left:861.4px;top:153.8px;font-size:5.3px;letter-spacing:-0.2px;color:#e4e4e4;line-height:6px">Layer Property</div>
<div class="t ly" style="left:844.4px;top:164px;letter-spacing:0;transform:scaleX(0.85)">Effect</div>
<div class="t ly" style="left:844.4px;top:181.8px">Expression color</div>
<div class="t ly" style="left:882.2px;top:192px">Color</div>
<!-- ===== Layer panel ===== -->
<div class="a tabrow" style="left:839.8px;top:269.6px;width:118px;height:7.4px"></div>
<div class="a" style="left:841.2px;top:270.4px;width:7.2px;height:5.4px;background:#5f5f61;border:0.5px solid #484848"></div>
<div class="tab" style="left:849.2px;top:270px;width:26px;height:7.2px"></div>
<div class="tabi" style="left:876.2px;top:270.4px;width:29px;height:6.6px"></div>
<div class="tabi" style="left:906px;top:270.4px;width:40px;height:6.6px"></div>
<div class="a pbg" style="left:839.8px;top:277px;width:116px;height:240.4px"></div>
<div class="a" style="left:840px;top:517.4px;width:116px;height:1.6px;background:#4a4a4c"></div>
<div class="t" style="left:861.6px;top:271.2px;font-size:5.3px;letter-spacing:-0.2px;color:#e4e4e4;line-height:6px">Layer</div>
<div class="t" style="left:888.4px;top:271.2px;font-size:5.3px;letter-spacing:-0.2px;color:#8e8f92;line-height:6px">History</div>
<div class="t" style="left:918.6px;top:271.2px;font-size:5.3px;letter-spacing:-0.2px;color:#8e8f92;line-height:6px">Auto Action</div>
<svg style="left:840px;top:268px" width="116" height="46" viewBox="840 268 116 46">
<path d="M843.4 271.6 L845.2 273 L843.4 274.4Z" fill="#a4a4a6"/><path d="M846.4 271.6v2.8" stroke="#a4a4a6" stroke-width="0.7" fill="none"/>
<path d="M850.6 272 l4.2 -1.4 4.2 1.4 -4.2 1.4Z" fill="#f2f2f2" stroke="#444" stroke-width="0.4"/><path d="M850.6 274.2 l4.2 1.4 4.2 -1.4 M850.6 276.4 l4.2 1.4 4.2 -1.4" fill="none" stroke="#ececec" stroke-width="1"/>
<circle cx="880" cy="273.6" r="2.4" fill="none" stroke="#222" stroke-width="0.8"/><path d="M880 272.4 v1.4 h1.2" stroke="#222" stroke-width="0.5" fill="none"/><path d="M883 271.6 l2.4 1.6 -2.4 1.6" fill="#ddd"/>
<path d="M909.6 275.2 l2 -2.4 1.6 1.4 2.2 -3" stroke="#555" stroke-width="0.7" fill="none"/>
<!-- normal dropdown -->
<rect x="840.8" y="279.8" width="57" height="9" rx="1" fill="url(#ddg2)" stroke="#5c5d60" stroke-width="0.5"/><path d="M892.6 283.4 h3.6 l-1.8 2.2Z" fill="#2a2a2a"/>
<!-- opacity slider -->
<rect x="901.4" y="282" width="37" height="4.4" fill="#6c6d70" stroke="#55565a" stroke-width="0.5"/><rect x="901.8" y="282.4" width="19.6" height="3.6" fill="#e8e8ea"/><path d="M921.8 279.6v9.6" stroke="#666769" stroke-width="0.8"/>
<path d="M902.6 284.2 q1 -1.4 2 0 t2 0 t2 0 t2 0 t2 0 t2 0 t2 0 t2 0 t2 0" stroke="#fff" stroke-width="1.2" fill="none"/>
<path d="M951.4 283.4 l1.8 -2.4 1.8 2.4Z M951.4 285 l1.8 2.4 1.8 -2.4Z" fill="#2a2a2a"/>
<!-- icon row 2 -->
<rect x="841.4" y="291" width="9" height="8.4" fill="#808185" stroke="#4c4c4e" stroke-width="0.6"/><rect x="842.4" y="292" width="7" height="6.4" fill="#77787b" stroke="#5a5b5e" stroke-width="0.4"/><path d="M851.8 294.6 h3.2 l-1.6 2Z" fill="#2a2a2a"/><rect x="851" y="291" width="5" height="8.4" fill="none" stroke="#68696c" stroke-width="0.4"/>
<ellipse cx="864.6" cy="295.2" rx="3.6" ry="2.4" fill="#2a2a2a"/><ellipse cx="864.6" cy="294.6" rx="2.2" ry="0.9" fill="#9a9b9e"/>
<path d="M874.4 291.4v7.6" stroke="#2a2a2a" stroke-width="0.8"/><circle cx="874.4" cy="293" r="1" fill="#eee" stroke="#222" stroke-width="0.4"/><path d="M873 296.4h2.8" stroke="#2a2a2a" stroke-width="0.6"/>
<path d="M882.6 291 h1.8 v5 l-0.9 3 -0.9 -3Z" fill="#e8c020" stroke="#555" stroke-width="0.3"/><rect x="882.6" y="291" width="1.8" height="2.6" fill="#38a0e8"/><path d="M883.5 297 l-0.5 1.8h1Z" fill="#222"/>
<path d="M890.4 294.4 h5 v4.6 h-5Z" fill="#c8c8ca" stroke="#222" stroke-width="0.6"/><path d="M891.4 294.4 v-1.6 q1.5 -1.8 3 0 v1.6" fill="none" stroke="#222" stroke-width="0.7"/><rect x="891.6" y="295.6" width="2.6" height="2.2" fill="#333"/>
<path d="M900.2 293.4 q2.4 -2.4 4.8 0 q0.4 2.6 -2 3 q-3 0 -2.8 -3Z" fill="#e0e0e0" stroke="#333" stroke-width="0.5"/><path d="M903.4 297.8 l3 -3" stroke="#eee" stroke-width="0.9"/><circle cx="901.6" cy="294" r="0.8" fill="#333"/>
<rect x="909" y="291" width="14.6" height="8.4" fill="#86878a" stroke="#707174" stroke-width="0.4"/><path d="M911.6 293 l1.6 3.6 1.6 -3.6 M914 296 l2 0" stroke="#6a6b6e" stroke-width="0.7" fill="none"/><path d="M919.6 294.6 h2.8 l-1.4 1.8Z" fill="#68696c"/>
<rect x="926.6" y="291" width="14.6" height="8.4" fill="#86878a" stroke="#707174" stroke-width="0.4"/><path d="M928.4 298.4 l6 -6.4 M928.4 292 l6 6.4" stroke="#6a6b6e" stroke-width="0.6"/><path d="M936.6 294.6 h2.8 l-1.4 1.8Z" fill="#68696c"/>
<rect x="943.6" y="292" width="4.2" height="4.4" fill="#3a86e8"/><rect x="945.2" y="294" width="4" height="4.4" fill="#f4f4f4"/><path d="M951.2 294.6 h3.2 l-1.6 2Z" fill="#2a2a2a"/>
<!-- icon row 3 -->
<path d="M841.4 304 l3.8 -1.2 3.8 1.2 -3.8 1.2Z" fill="#f0f0f0" stroke="#333" stroke-width="0.5"/><path d="M841.4 306 l3.8 1.2 3.8 -1.2 M841.4 308 l3.8 1.2 3.8 -1.2" fill="none" stroke="#e8e8e8" stroke-width="0.9"/>
<path d="M879.6 302.2 h6.2 v5.2 l-2 2.2 h-4.2Z" fill="#f6f6f6" stroke="#222" stroke-width="0.7"/><path d="M883.6 309.4 v-2 h2" fill="none" stroke="#222" stroke-width="0.6"/>
<path d="M889 302.2 h6.2 v7.4 h-6.2Z" fill="#f6f6f6" stroke="#222" stroke-width="0.7"/><rect x="893.6" y="307.4" width="2.8" height="2.6" fill="#c8c8ca" stroke="#222" stroke-width="0.5"/>
<path d="M898.4 303 h2.6 l0.6 0.9 h2.6 v5.4 h-5.8Z" fill="#c8c8ca" stroke="#222" stroke-width="0.7"/><path d="M901.6 304.6 h5.2 v3.2 l-1.6 1.8 h-3.6Z" fill="#f6f6f6" stroke="#222" stroke-width="0.7"/>
<circle cx="912.4" cy="306" r="2.4" fill="none" stroke="#5e5f62" stroke-width="0.6"/><path d="M912.4 304.6v2.4M911.4 306.2l1 1 1-1" stroke="#5e5f62" stroke-width="0.5" fill="none"/>
<path d="M923 303.4 l-2.8 2.6 h1.6 v2.4 h2.4 v-2.4 h1.6Z" fill="none" stroke="#5e5f62" stroke-width="0.5"/>
<rect x="928.4" y="303.2" width="8" height="5.6" fill="#1e1e1e"/><rect x="930" y="304.4" width="2.6" height="3" fill="#eee"/><path d="M932.6 305.8 l1.6 -1v2Z" fill="#eee"/>
<path d="M940 303.2v6M940 303.6 l3.4 1.2 -3.4 1.4" fill="#b8b8ba" stroke="#555" stroke-width="0.5"/><path d="M942 308.6h3" stroke="#555" stroke-width="0.5"/>
<path d="M949.4 304.4 h5.8 l-0.7 5.4 h-4.4Z" fill="#f4f4f4" stroke="#1e1e1e" stroke-width="0.8"/><ellipse cx="952.3" cy="303.8" rx="3.2" ry="1.1" fill="#ddd" stroke="#1e1e1e" stroke-width="0.7"/><path d="M951.2 305.8v3M952.3 305.8v3M953.4 305.8v3" stroke="#666" stroke-width="0.4"/>
<path d="M840 312.9h116" stroke="#55565a" stroke-width="0.7"/>
<defs><linearGradient id="ddg2" x1="0" y1="0" x2="0" y2="1"><stop offset="0" stop-color="#808185"/><stop offset="1" stop-color="#6e6f73"/></linearGradient></defs>
</svg>
<div class="t ly" style="left:858px;top:281px">Normal</div>
<div class="t ly" style="right:9.399999999999977px;top:281px;transform-origin:right">55</div>
<!-- layer list -->
<div class="a" style="left:840.9px;top:313.4px;width:0.9px;height:204px;background:#5a5b5e"></div><div class="a" style="left:841px;top:313.4px;width:110.4px;height:66px;background:#5e5f62"></div>
<div class="a" style="left:951px;top:313.4px;width:5px;height:204px;background:#838488;border-left:0.6px solid #5b5b5d"></div>
<div class="a" style="left:841px;top:313.8px;width:10.4px;height:15.6px;background:#808185"></div><div class="a" style="left:852px;top:313.8px;width:8.2px;height:15.6px;background:#808185"></div><div class="a" style="left:861.2px;top:313.8px;width:90px;height:15.6px;background:linear-gradient(#85a3b4,#7392a4)"></div><div class="a" style="left:863.6px;top:314.8px;width:17.6px;height:13.6px;background-color:#fff;background-image:linear-gradient(45deg,#d4d4d4 25%,transparent 25%,transparent 75%,#d4d4d4 75%),linear-gradient(45deg,#d4d4d4 25%,transparent 25%,transparent 75%,#d4d4d4 75%);background-size:4px 4px;background-position:0 0,2px 2px;border:0.9px solid #2c3a44"></div><div class="t ly lyn" style="left:882.6px;top:315.2px">55 % Normal</div><div class="t ly" style="left:882.6px;top:321.6px">Layer 3</div><svg style="left:841px;top:313.8px" width="10.4" height="15.6" viewBox="0 0 10.4 15.6"><path d="M2.4 8 Q5.2 5 8 8 Q5.2 10.6 2.4 8Z" fill="#e8e8e8" stroke="#222" stroke-width="0.5"/><circle cx="5.2" cy="7.9" r="1.3" fill="#1a1a1a"/><path d="M2.2 7.2 Q5.2 4.4 8.2 7.2" stroke="#222" stroke-width="0.7" fill="none"/></svg><svg style="left:852px;top:313.8px" width="8.6" height="15.6" viewBox="0 0 8.6 15.6"><path d="M1.4 10.6 Q4.2 10.4 6 6.6" stroke="#1e1e1e" stroke-width="0.7" fill="none"/><path d="M5.6 7.2 L7.2 4.6 L6.6 7.6Z" fill="#1e1e1e"/></svg>
<div class="a" style="left:841px;top:330.2px;width:10.4px;height:15.6px;background:#808185"></div><div class="a" style="left:852px;top:330.2px;width:8.2px;height:15.6px;background:#808185"></div><div class="a" style="left:861.2px;top:330.2px;width:90px;height:15.6px;background:#808185"></div><div class="a" style="left:863.6px;top:331.2px;width:17.6px;height:13.6px;background-color:#fff;background-image:linear-gradient(45deg,#d4d4d4 25%,transparent 25%,transparent 75%,#d4d4d4 75%),linear-gradient(45deg,#d4d4d4 25%,transparent 25%,transparent 75%,#d4d4d4 75%);background-size:4px 4px;background-position:0 0,2px 2px;border:0.9px solid #5a5b5e"></div><div class="t ly lyn" style="left:882.6px;top:331.59999999999997px">45 % Normal</div><div class="t ly" style="left:882.6px;top:338.0px">Layer 2</div>
<div class="a" style="left:841px;top:346.6px;width:10.4px;height:15.6px;background:#808185"></div><div class="a" style="left:852px;top:346.6px;width:8.2px;height:15.6px;background:#808185"></div><div class="a" style="left:861.2px;top:346.6px;width:90px;height:15.6px;background:#808185"></div><div class="a" style="left:863.6px;top:347.6px;width:17.6px;height:13.6px;background-color:#fff;background-image:linear-gradient(45deg,#d4d4d4 25%,transparent 25%,transparent 75%,#d4d4d4 75%),linear-gradient(45deg,#d4d4d4 25%,transparent 25%,transparent 75%,#d4d4d4 75%);background-size:4px 4px;background-position:0 0,2px 2px;border:0.9px solid #5a5b5e"></div><div class="t ly lyn" style="left:882.6px;top:348.0px">100 % Normal</div><div class="t ly" style="left:882.6px;top:354.40000000000003px">Layer 1</div>
<div class="a" style="left:841px;top:363px;width:10.4px;height:15.6px;background:#808185"></div><div class="a" style="left:852px;top:363px;width:8.2px;height:15.6px;background:#808185"></div><div class="a" style="left:861.2px;top:363px;width:90px;height:15.6px;background:#808185"></div><div class="a" style="left:863.6px;top:364px;width:17.6px;height:13.6px;background:#fff;border:0.6px solid #5a5b5e"></div><svg style="left:883px;top:363px" width="14" height="14" viewBox="0 0 14 14"><rect x="0.6" y="1" width="10.2" height="10" rx="1" fill="#6e6f72" stroke="#505052" stroke-width="0.5"/><path d="M2.4 2.2 h4.4 l2.2 2.2 v5.6 h-6.6Z" fill="#f4f4f4" stroke="#2a2a2a" stroke-width="0.6"/><path d="M6.8 2.2 v2.2 h2.2" fill="#ccc" stroke="#2a2a2a" stroke-width="0.5"/></svg><div class="t ly" style="left:894.8px;top:370.8px">Paper</div><svg style="left:841px;top:363px" width="10.4" height="15.6" viewBox="0 0 10.4 15.6"><path d="M2.4 8 Q5.2 5 8 8 Q5.2 10.6 2.4 8Z" fill="#e8e8e8" stroke="#222" stroke-width="0.5"/><circle cx="5.2" cy="7.9" r="1.3" fill="#1a1a1a"/><path d="M2.2 7.2 Q5.2 4.4 8.2 7.2" stroke="#222" stroke-width="0.7" fill="none"/></svg>
<svg style="left:0;top:0" width="960" height="524" viewBox="0 0 960 524">
<defs><g id="sketch"><path d="M425.7 255.4 C425.3 253.4 425.8 249.6 426.0 247.0 C426.1 244.4 426.1 242.4 426.8 239.6 C427.5 236.8 428.2 233.2 429.9 230.2 C431.7 227.2 434.0 224.0 437.3 221.8 C440.6 219.6 446.0 217.2 449.9 217.0 C453.7 216.7 457.3 218.1 460.4 220.1 C463.5 222.1 466.5 225.7 468.4 229.1 C470.2 232.6 471.2 237.2 471.5 240.7 C471.9 244.2 471.3 247.3 470.5 250.1 C469.6 252.9 468.4 255.2 466.3 257.5 C464.2 259.8 461.1 262.3 457.9 263.8 C454.6 265.3 450.5 266.7 446.7 266.7 C443.0 266.8 438.7 265.3 435.6 264.0 C432.6 262.7 430.1 260.6 428.5 259.2 C426.8 257.7 426.2 257.4 425.7 255.4 M430.6 242.8 C430.7 241.4 430.9 238.9 431.6 237.5 C432.4 236.1 433.9 234.7 435.2 234.4 C436.5 234.0 438.3 234.4 439.4 235.4 C440.5 236.5 441.6 238.8 441.9 240.7 C442.3 242.6 442.1 245.5 441.5 247.0 C440.9 248.5 439.7 249.6 438.3 249.9 C437.0 250.3 434.7 249.8 433.5 249.1 C432.3 248.4 431.5 247.0 431.0 245.9 C430.5 244.9 430.5 244.2 430.6 242.8 M436.5 243.8 C436.5 242.8 436.8 241.0 437.3 240.3 C437.8 239.5 438.7 239.1 439.4 239.4 C440.1 239.8 441.0 241.2 441.3 242.4 C441.6 243.6 441.5 245.6 441.1 246.6 C440.7 247.6 439.6 248.3 439.0 248.3 C438.3 248.3 437.5 247.3 437.1 246.6 C436.7 245.8 436.4 244.9 436.5 243.8 M449.5 243.8 C449.6 242.4 449.9 239.6 450.7 238.2 C451.6 236.7 453.1 235.5 454.5 235.2 C455.9 235.0 458.0 235.4 459.1 236.5 C460.3 237.6 461.2 240.0 461.4 241.7 C461.7 243.5 461.5 245.6 460.8 247.0 C460.1 248.4 458.8 249.7 457.5 250.1 C456.1 250.6 453.8 250.0 452.6 249.5 C451.4 249.0 450.6 247.9 450.1 247.0 C449.6 246.0 449.4 245.3 449.5 243.8 M455.8 243.8 C455.8 242.8 456.1 241.0 456.6 240.3 C457.1 239.5 458.0 238.9 458.7 239.2 C459.4 239.5 460.3 240.7 460.6 242.0 C460.9 243.2 460.7 245.5 460.4 246.6 C460.0 247.6 459.2 248.3 458.5 248.3 C457.8 248.3 456.9 247.3 456.4 246.6 C455.9 245.8 455.7 244.9 455.8 243.8 M437.3 226.0 L439.4 225.6 M453.7 226.0 L456.2 225.8 M440.7 252.5 L441.3 253.7 M443.6 259.2 C443.9 259.4 444.9 260.5 445.7 260.6 C446.5 260.8 447.8 260.3 448.4 260.0 C449.1 259.7 449.3 259.0 449.5 258.8 M465.9 241.1 C466.1 241.6 467.0 242.7 467.1 243.8 C467.3 245.0 467.0 247.0 466.7 248.0 C466.4 249.1 465.6 250.0 465.4 250.4 M446.1 266.7 C446.1 267.3 445.9 269.0 445.9 270.1 C445.9 271.2 446.1 272.9 446.1 273.5 M456.6 264.6 C456.6 265.4 456.7 267.5 456.8 269.0 C456.9 270.6 457.2 273.1 457.2 273.9 M446.1 273.5 C446.7 273.6 448.6 274.2 449.9 274.5 C451.2 274.8 452.4 275.2 453.7 275.1 C454.9 275.1 456.6 274.3 457.2 274.1 M453.0 274.3 C453.3 274.6 453.9 276.2 454.5 276.4 C455.1 276.6 456.3 275.7 456.6 275.6 M446.1 273.7 C444.8 273.8 441.0 273.9 438.3 274.3 C435.7 274.7 431.9 274.7 429.9 276.0 C428.0 277.2 427.3 279.1 426.4 281.6 C425.5 284.2 425.0 288.1 424.7 291.1 C424.3 294.1 424.2 296.4 424.3 299.5 C424.3 302.5 425.0 307.7 425.1 309.4 M431.0 282.3 C431.0 283.7 430.8 288.2 430.8 291.1 C430.8 294.0 431.0 296.5 431.2 299.5 C431.4 302.5 431.7 307.5 431.8 309.1 M457.2 274.3 C458.0 274.4 460.7 274.7 462.1 275.1 C463.4 275.6 464.5 275.5 465.4 276.8 C466.3 278.1 467.2 280.7 467.5 283.1 C467.9 285.5 467.6 288.7 467.5 291.1 C467.4 293.5 467.3 295.6 466.9 297.4 C466.6 299.2 465.7 301.2 465.4 302.0 M461.0 282.7 C461.0 283.7 460.8 286.5 460.6 289.0 C460.4 291.4 460.1 296.0 460.0 297.4" fill="none" stroke="#5a5a5a" stroke-linecap="round" stroke-linejoin="round"/></g></defs>
<use href="#sketch" stroke-width="0.6" opacity="0.8"/><path d="M437.3 240.3 C437.2 240.9 436.5 242.8 436.5 243.8 C436.4 244.9 436.7 245.8 437.1 246.6 C437.5 247.3 438.7 248.0 439.0 248.3 M456.6 240.3 C456.5 240.9 455.8 242.8 455.8 243.8 C455.7 244.9 455.9 245.8 456.4 246.6 C456.9 247.3 458.2 248.0 458.5 248.3 M431.6 237.5 C431.5 238.4 430.7 241.4 430.6 242.8 C430.5 244.2 430.9 245.4 431.0 245.9 M450.7 238.2 C450.5 239.1 449.6 242.4 449.5 243.8 C449.4 245.3 450.0 246.5 450.1 247.0 M431.0 239.6 C431.2 239.1 431.6 237.4 432.3 236.5 C433.0 235.6 434.1 234.6 435.2 234.4 C436.3 234.2 437.9 234.5 439.0 235.2 C440.0 235.9 441.1 238.0 441.5 238.6 M449.9 240.3 C450.1 239.7 450.6 237.8 451.4 236.9 C452.1 236.1 453.3 235.3 454.5 235.2 C455.7 235.1 457.6 235.6 458.7 236.3 C459.8 237.0 460.6 239.1 461.0 239.6" fill="none" stroke="#444" stroke-width="0.8" opacity="0.75" stroke-linecap="round"/>
<g transform="translate(843,45.8) scale(0.427) translate(-340.6,-173.6)"><use href="#sketch" stroke-width="1" opacity="0.75"/></g>
<path d="M386.4 247.5h3.6M392.8 247.5h3.6M391.4 242.7v3.4M391.4 249.1v3.4" stroke="#555" stroke-width="0.6" stroke-dasharray="1 0.5" opacity="0.9"/><rect x="391" y="247.1" width="0.8" height="0.8" fill="#666"/>
</svg>
<!-- ===== TASKBAR ===== -->
<div class="a" id="taskbar" style="left:0;top:518.8px;width:960px;height:5.2px;background:linear-gradient(#2c2c2c 0,#111 1.4px,#0c0c0c)">
<div class="a" style="left:24.2px;top:0.8px;width:172px;height:4.6px;background:#f4f4f4"></div>
<div class="a" style="left:392px;top:1px;width:28px;height:4.2px;background:#2a2a2a"></div>
<div class="a" style="left:883px;top:4px;width:12px;height:1.4px;background:repeating-linear-gradient(to right,#aaa 0 1.4px,transparent 1.4px 2.8px)"></div>
<div class="a" style="left:910px;top:4px;width:14px;height:1.4px;background:repeating-linear-gradient(to right,#aaa 0 1.4px,transparent 1.4px 2.8px)"></div>
</div>
</div>
</body>
</html>
